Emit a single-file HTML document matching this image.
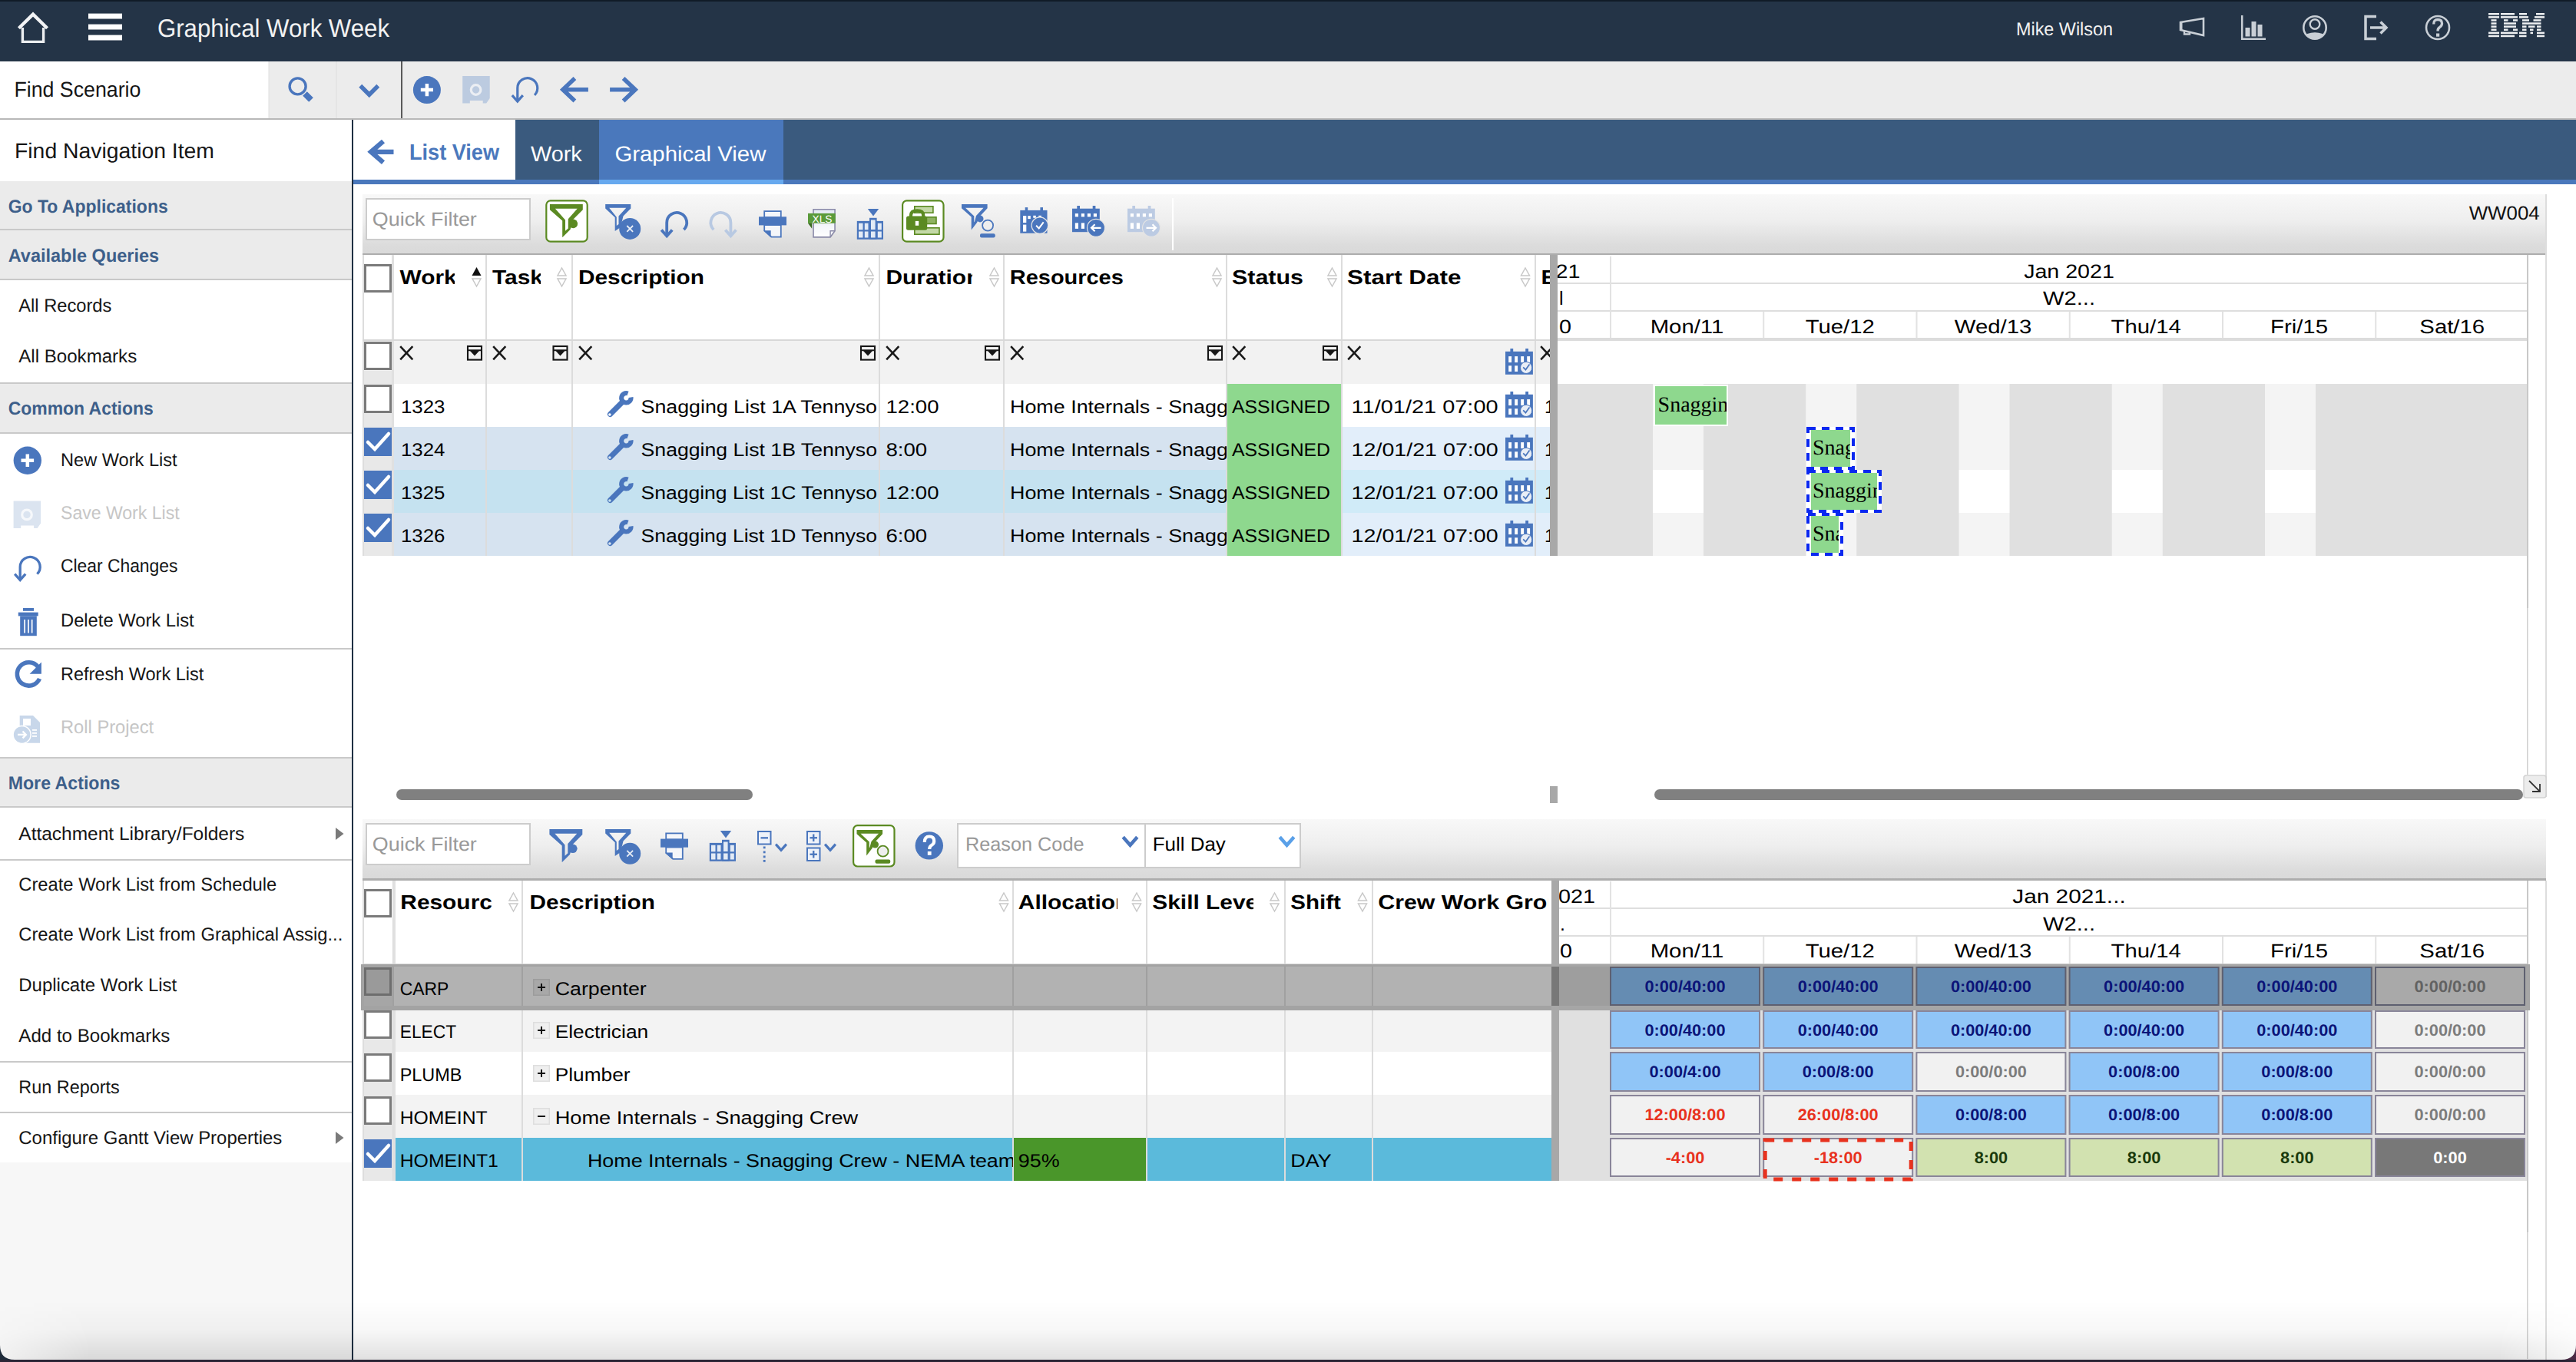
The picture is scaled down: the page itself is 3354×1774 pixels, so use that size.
<!DOCTYPE html>
<html><head><meta charset="utf-8"><title>Graphical Work Week</title>
<style>html,body{margin:0;padding:0;background:#fff;overflow:hidden;width:3354px;height:1774px}svg{display:block}</style></head>
<body><svg width="3354" height="1774" viewBox="0 0 3354 1774" text-rendering="geometricPrecision">
<defs><clipPath id="c1"><rect x="518.5" y="340" width="73.5" height="40"/></clipPath>
<clipPath id="c2"><rect x="639" y="340" width="65" height="40"/></clipPath>
<clipPath id="c3"><rect x="751" y="340" width="370" height="40"/></clipPath>
<clipPath id="c4"><rect x="1151.5" y="340" width="114.5" height="40"/></clipPath>
<clipPath id="c5"><rect x="1312.8" y="340" width="261.20000000000005" height="40"/></clipPath>
<clipPath id="c6"><rect x="1602" y="340" width="122" height="40"/></clipPath>
<clipPath id="c7"><rect x="1752" y="340" width="223.5" height="40"/></clipPath>
<clipPath id="c8"><rect x="2004.5" y="340" width="13.5" height="40"/></clipPath>
<clipPath id="c9"><rect x="830" y="500" width="313" height="56"/></clipPath>
<clipPath id="c10"><rect x="1310" y="500" width="287" height="56"/></clipPath>
<clipPath id="c11"><rect x="2000" y="500" width="18" height="56"/></clipPath>
<clipPath id="c12"><rect x="830" y="556" width="313" height="56"/></clipPath>
<clipPath id="c13"><rect x="1310" y="556" width="287" height="56"/></clipPath>
<clipPath id="c14"><rect x="2000" y="556" width="18" height="56"/></clipPath>
<clipPath id="c15"><rect x="830" y="612" width="313" height="56"/></clipPath>
<clipPath id="c16"><rect x="1310" y="612" width="287" height="56"/></clipPath>
<clipPath id="c17"><rect x="2000" y="612" width="18" height="56"/></clipPath>
<clipPath id="c18"><rect x="830" y="668" width="313" height="56"/></clipPath>
<clipPath id="c19"><rect x="1310" y="668" width="287" height="56"/></clipPath>
<clipPath id="c20"><rect x="2000" y="668" width="18" height="56"/></clipPath>
<clipPath id="c21"><rect x="2028" y="334" width="68" height="34"/></clipPath>
<clipPath id="c22"><rect x="2155" y="503" width="93" height="50"/></clipPath>
<clipPath id="c23"><rect x="2358" y="560" width="51" height="48"/></clipPath>
<clipPath id="c24"><rect x="2358" y="616" width="86" height="48"/></clipPath>
<clipPath id="c25"><rect x="2358" y="672" width="36" height="48"/></clipPath>
<clipPath id="c26"><rect x="519.3" y="1150" width="120.70000000000005" height="45"/></clipPath>
<clipPath id="c27"><rect x="687.5" y="1150" width="608.5" height="45"/></clipPath>
<clipPath id="c28"><rect x="1323.8" y="1150" width="131.20000000000005" height="45"/></clipPath>
<clipPath id="c29"><rect x="1498.3" y="1150" width="133.70000000000005" height="45"/></clipPath>
<clipPath id="c30"><rect x="1678.3" y="1150" width="86.70000000000005" height="45"/></clipPath>
<clipPath id="c31"><rect x="1792.3" y="1150" width="223.20000000000005" height="45"/></clipPath>
<clipPath id="c32"><rect x="760" y="1482" width="559" height="56"/></clipPath>
<clipPath id="c33"><rect x="2030" y="1148" width="67" height="34"/></clipPath></defs>
<rect x="0" y="0" width="3354" height="1774" fill="#ffffff" />
<rect x="0" y="0" width="3354" height="80" fill="#243447" />
<rect x="0" y="0" width="3354" height="2" fill="#101b27" />
<path d="M26,35.2 L43,18.6 L60,35.2" fill="none" stroke="#f2f3f5" stroke-width="4.3" stroke-linejoin="miter" stroke-linecap="square"/>
<path d="M29.4,36 L29.4,54.4 L56.6,54.4 L56.6,36" fill="none" stroke="#eceef0" stroke-width="3.4" stroke-linejoin="miter"/>
<rect x="115" y="17.6" width="44" height="6.9" fill="#ffffff" />
<rect x="115" y="31.6" width="44" height="6.9" fill="#ffffff" />
<rect x="115" y="45.6" width="44" height="6.9" fill="#ffffff" />
<path d="M2839,29 L2869,24 L2869,46 L2839,39 Z" fill="none" stroke="#c9cfd6" stroke-width="2.6" />
<path d="M2840,28 L2840,40" fill="none" stroke="#c9cfd6" stroke-width="3" />
<path d="M2844,40 L2844,44.5 L2851,44.5 L2851,41.5" fill="none" stroke="#c9cfd6" stroke-width="2.4" />
<path d="M2919.2,20 L2919.2,50.8 L2950,50.8" fill="none" stroke="#c9cfd6" stroke-width="2.5" />
<rect x="2923.5" y="36" width="6" height="11.5" fill="#c9cfd6" />
<rect x="2931.5" y="28" width="6" height="19.5" fill="#c9cfd6" />
<rect x="2939.5" y="32" width="6" height="15.5" fill="#c9cfd6" />
<circle cx="3014" cy="36" r="14.7" fill="none" stroke="#c9cfd6" stroke-width="2.6"/>
<circle cx="3014" cy="31.5" r="6.3" fill="none" stroke="#c9cfd6" stroke-width="2.4"/>
<path d="M3004,44 Q3014,40.5 3024,44 L3024.5,45.5 Q3020,51 3014,51 Q3008,51 3003.5,45.5 Z" fill="#c9cfd6" />
<path d="M3094,21.5 L3080,21.5 L3080,50.5 L3094,50.5" fill="none" stroke="#c9cfd6" stroke-width="3.5" />
<path d="M3086,36 L3107,36 M3099.5,28.5 L3107,36 L3099.5,43.5" fill="none" stroke="#c9cfd6" stroke-width="3.5" />
<circle cx="3174" cy="36" r="15" fill="none" stroke="#c9cfd6" stroke-width="2.6"/>
<path d="M3168.7,31.5 Q3168.5,25.5 3174,25.5 Q3179.5,25.5 3179.5,30.5 Q3179.5,33.5 3176.5,35.5 Q3174,37 3174,40.5" fill="none" stroke="#c9cfd6" stroke-width="3.3" />
<rect x="3172" y="43.5" width="4.2" height="4.2" fill="#c9cfd6" />
<rect x="3240" y="17" width="14" height="2.5" fill="#eef0f2" />
<rect x="3256" y="17" width="18" height="2.5" fill="#eef0f2" />
<rect x="3280" y="17" width="10" height="2.5" fill="#eef0f2" />
<rect x="3302" y="17" width="11" height="2.5" fill="#eef0f2" />
<rect x="3240" y="21.1" width="14" height="2.5" fill="#eef0f2" />
<rect x="3256" y="21.1" width="22" height="2.5" fill="#eef0f2" />
<rect x="3280" y="21.1" width="12" height="2.5" fill="#eef0f2" />
<rect x="3300" y="21.1" width="13" height="2.5" fill="#eef0f2" />
<rect x="3243.5" y="25.2" width="7" height="2.5" fill="#eef0f2" />
<rect x="3260" y="25.2" width="5.5" height="2.5" fill="#eef0f2" />
<rect x="3272" y="25.2" width="6" height="2.5" fill="#eef0f2" />
<rect x="3284" y="25.2" width="9" height="2.5" fill="#eef0f2" />
<rect x="3298.5" y="25.2" width="10" height="2.5" fill="#eef0f2" />
<rect x="3243.5" y="29.3" width="7" height="2.5" fill="#eef0f2" />
<rect x="3260" y="29.3" width="16" height="2.5" fill="#eef0f2" />
<rect x="3284" y="29.3" width="24.5" height="2.5" fill="#eef0f2" />
<rect x="3243.5" y="33.4" width="7" height="2.5" fill="#eef0f2" />
<rect x="3260" y="33.4" width="16" height="2.5" fill="#eef0f2" />
<rect x="3284" y="33.4" width="5.5" height="2.5" fill="#eef0f2" />
<rect x="3292" y="33.4" width="8.5" height="2.5" fill="#eef0f2" />
<rect x="3303" y="33.4" width="5.5" height="2.5" fill="#eef0f2" />
<rect x="3243.5" y="37.5" width="7" height="2.5" fill="#eef0f2" />
<rect x="3260" y="37.5" width="5.5" height="2.5" fill="#eef0f2" />
<rect x="3272" y="37.5" width="6" height="2.5" fill="#eef0f2" />
<rect x="3284" y="37.5" width="5.5" height="2.5" fill="#eef0f2" />
<rect x="3294" y="37.5" width="4.5" height="2.5" fill="#eef0f2" />
<rect x="3303" y="37.5" width="5.5" height="2.5" fill="#eef0f2" />
<rect x="3240" y="41.6" width="14" height="2.5" fill="#eef0f2" />
<rect x="3256" y="41.6" width="22" height="2.5" fill="#eef0f2" />
<rect x="3280" y="41.6" width="9.5" height="2.5" fill="#eef0f2" />
<rect x="3294.5" y="41.6" width="3.5" height="2.5" fill="#eef0f2" />
<rect x="3303" y="41.6" width="10" height="2.5" fill="#eef0f2" />
<rect x="3240" y="45.7" width="14" height="2.5" fill="#eef0f2" />
<rect x="3256" y="45.7" width="18" height="2.5" fill="#eef0f2" />
<rect x="3280" y="45.7" width="9.5" height="2.5" fill="#eef0f2" />
<rect x="3303" y="45.7" width="10" height="2.5" fill="#eef0f2" />
<text x="205" y="48" font-family="Liberation Sans" font-size="33" fill="#f2f2f2" textLength="302.0" lengthAdjust="spacingAndGlyphs" >Graphical Work Week</text>
<text x="2625" y="45.5" font-family="Liberation Sans" font-size="24" fill="#f2f2f2" textLength="126.0" lengthAdjust="spacingAndGlyphs" >Mike Wilson</text>
<rect x="0" y="80" width="3354" height="75" fill="#ececec" />
<rect x="0" y="80" width="350" height="75" fill="#ffffff" />
<line x1="350" y1="80" x2="350" y2="155" stroke="#dedede" stroke-width="1" />
<line x1="438" y1="80" x2="438" y2="155" stroke="#dedede" stroke-width="1" />
<rect x="522" y="80" width="2" height="75" fill="#5a5a5a" />
<rect x="0" y="154" width="3354" height="2" fill="#b8b8b8" />
<text x="18.4" y="126.3" font-family="Liberation Sans" font-size="28" fill="#161616" textLength="165.0" lengthAdjust="spacingAndGlyphs" >Find Scenario</text>
<circle cx="387.6" cy="112.4" r="10.5" fill="none" stroke="#4a76bd" stroke-width="3.4"/>
<path d="M397,122 L405,130" fill="none" stroke="#4a76bd" stroke-width="8" />
<path d="M469.25,111.75 L480.75,123.25 L492.25,111.75" fill="none" stroke="#4a76bd" stroke-width="5.5" />
<circle cx="555.9" cy="117.1" r="18" fill="#4a76bd"/>
<path d="M555.9,109 L555.9,125.2 M547.8,117.1 L564,117.1" fill="none" stroke="#fff" stroke-width="4.5" />
<path d="M602.2,99 L637.7,99 L637.7,128 L633.2,134.5 L628.7,134.5 L628.7,131 L611.8000000000001,131 L611.8000000000001,134.5 L602.2,134.5 Z" fill="#bccbe0" />
<circle cx="619.6" cy="117" r="6.3" fill="none" stroke="#ebeef3" stroke-width="3.2"/>
<path d="M673.8,130.1 L673.8,114.7 A13,13 0 1 1 696.0,123.9" fill="none" stroke="#4a76bd" stroke-width="3.2" />
<path d="M666.8,124.1 L673.8,132.1 L680.8,124.1" fill="none" stroke="#4a76bd" stroke-width="3.2" stroke-linejoin="miter"/>
<path d="M765.9,116.75 L735.4,116.75 M748.4,102.1 L732.9,116.75 L748.4,131.39999999999998" fill="none" stroke="#4a76bd" stroke-width="5.5" />
<path d="M794.1,116.75 L824.6,116.75 M811.6,102.1 L827.1,116.75 L811.6,131.39999999999998" fill="none" stroke="#4a76bd" stroke-width="5.5" />
<rect x="0" y="156" width="458" height="1615" fill="#ffffff" />
<rect x="0" y="1514" width="458" height="257" fill="#f7f7f7" />
<rect x="458" y="156" width="2" height="1615" fill="#1f3043" />
<text x="19" y="206" font-family="Liberation Sans" font-size="28" fill="#161616" textLength="260.0" lengthAdjust="spacingAndGlyphs" >Find Navigation Item</text>
<rect x="0" y="236" width="458" height="62" fill="#ebebeb" />
<rect x="0" y="298" width="458" height="2" fill="#c9c9c9" />
<text x="10.7" y="276.7" font-family="Liberation Sans" font-size="24" fill="#3d5f8a" font-weight="bold" textLength="208.0" lengthAdjust="spacingAndGlyphs" >Go To Applications</text>
<rect x="0" y="300" width="458" height="63" fill="#ebebeb" />
<rect x="0" y="363" width="458" height="2" fill="#c9c9c9" />
<text x="10.7" y="340.7" font-family="Liberation Sans" font-size="24" fill="#3d5f8a" font-weight="bold" textLength="196.5" lengthAdjust="spacingAndGlyphs" >Available Queries</text>
<text x="24.3" y="405.6" font-family="Liberation Sans" font-size="24" fill="#161616" textLength="121.0" lengthAdjust="spacingAndGlyphs" >All Records</text>
<text x="24.3" y="471.8" font-family="Liberation Sans" font-size="24" fill="#161616" textLength="153.9" lengthAdjust="spacingAndGlyphs" >All Bookmarks</text>
<rect x="0" y="498" width="458" height="2" fill="#c9c9c9" />
<rect x="0" y="500" width="458" height="63" fill="#ebebeb" />
<rect x="0" y="563" width="458" height="2" fill="#c9c9c9" />
<text x="10.7" y="540" font-family="Liberation Sans" font-size="24" fill="#3d5f8a" font-weight="bold" textLength="189.0" lengthAdjust="spacingAndGlyphs" >Common Actions</text>
<text x="79" y="606.5" font-family="Liberation Sans" font-size="24" fill="#161616" textLength="151.6" lengthAdjust="spacingAndGlyphs" >New Work List</text>
<text x="79" y="676.3" font-family="Liberation Sans" font-size="24" fill="#c6c6c6" textLength="154.6" lengthAdjust="spacingAndGlyphs" >Save Work List</text>
<text x="79" y="745.3" font-family="Liberation Sans" font-size="24" fill="#161616" textLength="152.4" lengthAdjust="spacingAndGlyphs" >Clear Changes</text>
<text x="79" y="815.8" font-family="Liberation Sans" font-size="24" fill="#161616" textLength="173.7" lengthAdjust="spacingAndGlyphs" >Delete Work List</text>
<text x="79" y="885.6" font-family="Liberation Sans" font-size="24" fill="#161616" textLength="186.2" lengthAdjust="spacingAndGlyphs" >Refresh Work List</text>
<text x="79" y="955.4" font-family="Liberation Sans" font-size="24" fill="#c6c6c6" textLength="121.1" lengthAdjust="spacingAndGlyphs" >Roll Project</text>
<rect x="0" y="844" width="458" height="2" fill="#c9c9c9" />
<rect x="0" y="986" width="458" height="2" fill="#c9c9c9" />
<circle cx="35.8" cy="599.8" r="18.2" fill="#4a76bd"/>
<path d="M35.8,591.5 L35.8,608.1 M27.5,599.8 L44.1,599.8" fill="none" stroke="#fff" stroke-width="4.5" />
<path d="M17.6,652.4 L53.1,652.4 L53.1,681.4 L48.6,687.9 L44.1,687.9 L44.1,684.4 L27.200000000000003,684.4 L27.200000000000003,687.9 L17.6,687.9 Z" fill="#dbe4f0" />
<circle cx="35.0" cy="670.4" r="6.3" fill="none" stroke="#f6f8fb" stroke-width="3.2"/>
<path d="M26.2,753.6 L26.2,738.4 A13,13 0 1 1 48.4,747.6" fill="none" stroke="#4a76bd" stroke-width="3.3" />
<path d="M19.2,747.6 L26.2,755.6 L33.2,747.6" fill="none" stroke="#4a76bd" stroke-width="3.3" stroke-linejoin="miter"/>
<rect x="30" y="792" width="14" height="3.8" fill="#4a76bd" />
<rect x="23.8" y="797.6" width="25.9" height="4.8" fill="#4a76bd" />
<rect x="26.2" y="802.4" width="21.6" height="25.8" fill="#4a76bd" />
<rect x="31.3" y="807" width="1.7" height="17.5" fill="#ffffff" />
<rect x="36.1" y="807" width="1.7" height="17.5" fill="#ffffff" />
<rect x="40.8" y="807" width="1.7" height="17.5" fill="#ffffff" />
<path d="M49.5,868.5 A15.2,15.2 0 1 0 51.5,884" fill="none" stroke="#4a76bd" stroke-width="5.6" />
<path d="M38.6,877.7 L53.9,877.7 L53.9,862.4 Z" fill="#4a76bd" />
<path d="M25.7,932 L43,932 L52,941 L52,967.8 L25.7,967.8 Z" fill="#c8d7ea" />
<rect x="30" y="936" width="10" height="9" fill="#ffffff" />
<rect x="42" y="950" width="6" height="1.8" fill="#ffffff" />
<rect x="42" y="954" width="6" height="1.8" fill="#ffffff" />
<rect x="42" y="958" width="6" height="1.8" fill="#ffffff" />
<circle cx="28.6" cy="956.9" r="11.5" fill="#c8d7ea" stroke="#ffffff" stroke-width="1.5"/>
<path d="M23,956.9 L33.5,956.9 M29.5,952.5 L33.8,956.9 L29.5,961.3" fill="none" stroke="#ffffff" stroke-width="2.4" />
<rect x="0" y="988" width="458" height="62" fill="#ebebeb" />
<rect x="0" y="1050" width="458" height="2" fill="#c9c9c9" />
<text x="10.7" y="1027.7" font-family="Liberation Sans" font-size="24" fill="#3d5f8a" font-weight="bold" textLength="145.8" lengthAdjust="spacingAndGlyphs" >More Actions</text>
<text x="24.3" y="1093.8" font-family="Liberation Sans" font-size="24" fill="#161616" textLength="294.0" lengthAdjust="spacingAndGlyphs" >Attachment Library/Folders</text>
<text x="24.3" y="1159.5" font-family="Liberation Sans" font-size="24" fill="#161616" textLength="336.0" lengthAdjust="spacingAndGlyphs" >Create Work List from Schedule</text>
<text x="24.3" y="1225.1" font-family="Liberation Sans" font-size="24" fill="#161616" textLength="422.0" lengthAdjust="spacingAndGlyphs" >Create Work List from Graphical Assig...</text>
<text x="24.3" y="1291.2" font-family="Liberation Sans" font-size="24" fill="#161616" textLength="205.9" lengthAdjust="spacingAndGlyphs" >Duplicate Work List</text>
<text x="24.3" y="1357.2" font-family="Liberation Sans" font-size="24" fill="#161616" textLength="197.0" lengthAdjust="spacingAndGlyphs" >Add to Bookmarks</text>
<text x="24.3" y="1423.7" font-family="Liberation Sans" font-size="24" fill="#161616" textLength="131.5" lengthAdjust="spacingAndGlyphs" >Run Reports</text>
<text x="24.3" y="1489.7" font-family="Liberation Sans" font-size="24" fill="#161616" textLength="343.0" lengthAdjust="spacingAndGlyphs" >Configure Gantt View Properties</text>
<rect x="0" y="1119" width="458" height="2" fill="#c9c9c9" />
<rect x="0" y="1382" width="458" height="2" fill="#c9c9c9" />
<rect x="0" y="1448" width="458" height="2" fill="#c9c9c9" />
<path d="M437,1078 L447.5,1086 L437,1094 Z" fill="#7a7a7a" />
<path d="M437,1474 L447.5,1482 L437,1490 Z" fill="#7a7a7a" />
<rect x="460" y="156" width="2894" height="78" fill="#3a5a7e" />
<rect x="460" y="156" width="211" height="78" fill="#ffffff" />
<rect x="780" y="156" width="240" height="78" fill="#4a78bc" />
<rect x="460" y="234" width="2894" height="6" fill="#4a78bc" />
<rect x="780" y="234" width="240" height="6" fill="#67a9ef" />
<text x="533" y="208" font-family="Liberation Sans" font-size="29" fill="#4a78bc" font-weight="bold" textLength="117.0" lengthAdjust="spacingAndGlyphs" >List View</text>
<text x="691" y="209.8" font-family="Liberation Sans" font-size="28" fill="#ffffff" textLength="66.7" lengthAdjust="spacingAndGlyphs" >Work</text>
<text x="800.4" y="209.8" font-family="Liberation Sans" font-size="28" fill="#ffffff" textLength="197.0" lengthAdjust="spacingAndGlyphs" >Graphical View</text>
<path d="M512.5,197.8 L485,197.8 M499,184 L483,197.8 L499,211.6" fill="none" stroke="#4a76bd" stroke-width="6.2" />
<defs><linearGradient id="tbg1" x1="0" y1="0" x2="0" y2="1"><stop offset="0" stop-color="#f8f8f8"/><stop offset="0.45" stop-color="#eeeeee"/><stop offset="0.85" stop-color="#dcdcdc"/><stop offset="1" stop-color="#d9d9d9"/></linearGradient></defs>
<rect x="472" y="253" width="2843" height="77" fill="url(#tbg1)" />
<rect x="472" y="330" width="2843" height="2" fill="#adadad" />
<rect x="477.0" y="259.0" width="213" height="53" fill="#ffffff" stroke="#cccccc" stroke-width="2" />
<text x="484.8" y="294" font-family="Liberation Sans" font-size="25" fill="#999999" textLength="136.0" lengthAdjust="spacingAndGlyphs" >Quick Filter</text>
<rect x="711.3000000000001" y="261.3" width="53.4" height="53.4" rx="5.5" fill="#fff" stroke="#5b8a22" stroke-width="2.2"/>
<path d="M715.9,266.1 L758.8,266.1 L758.8,273.2 L746.5,285.5 L742.5,299.0 L732.2,309.3 L732.2,287.5 L715.9,273.2 Z M722.9,271.8 L751.7,271.8 L739.8,285.2 L739.8,297.4 L736.0,300.8 L736.0,286.5 Z" fill="#5b8a22" fill-rule="evenodd"/>
<circle cx="746.3" cy="291.4" r="5.8" fill="#5b8a22"/>
<path d="M788.2,266.1 L821.3,266.1 L821.3,271.5 L811.5,281.5 L808.0,296.0 L800.7,301.0 L800.7,283.3 L788.2,271.5 Z M793.2,270.8 L815.3,270.8 L805.5,281.6 L805.5,292.0 L802.8,294.0 L802.8,282.7 Z" fill="#4a76bd" fill-rule="evenodd"/>
<circle cx="820.2" cy="297.9" r="14" fill="#4a76bd"/>
<path d="M816.3,294.0 L824.1,301.8 M824.1,294.0 L816.3,301.8" fill="none" stroke="#e8edf5" stroke-width="1.8" />
<path d="M868.2,305.4 L868.2,290 A13,13 0 1 1 890.4,299.2" fill="none" stroke="#4a76bd" stroke-width="3.8" />
<path d="M861.2,299.4 L868.2,307.4 L875.2,299.4" fill="none" stroke="#4a76bd" stroke-width="3.8" stroke-linejoin="miter"/>
<path d="M951.4,305.4 L951.4,290 A13,13 0 1 0 929.2,299.2" fill="none" stroke="#b8c9e2" stroke-width="3.8" />
<path d="M944.4,299.4 L951.4,307.4 L958.4,299.4" fill="none" stroke="#b8c9e2" stroke-width="3.8" stroke-linejoin="miter"/>
<rect x="995.2" y="275.09999999999997" width="21.6" height="8" fill="#f4f6fa" stroke="#4a76bd" stroke-width="1.8"/>
<rect x="988" y="282.3" width="36" height="11.1" fill="#4a76bd" />
<path d="M995.2,293.2 L1016.8,293.2 L1016.8,308.59999999999997 L1004.6,308.59999999999997 L995.2,300.7 Z" fill="#f4f6fa" stroke="#4a76bd" stroke-width="1.8" />
<path d="M994.3,300.2 L1003.7,300.2 L1003.7,309.5 Z" fill="#4a76bd" />
<defs><linearGradient id="xlsg" x1="0" y1="0" x2="0" y2="1"><stop offset="0" stop-color="#e3e8f3"/><stop offset="1" stop-color="#ffffff"/></linearGradient></defs>
<path d="M1059.05,272.75 L1087.05,272.75 L1087.05,300.8 L1081.1,308.85 L1059.05,308.85 Z" fill="url(#xlsg)" stroke="#8a8aa8" stroke-width="1.6" />
<path d="M1087,300.8 L1081.1,300.8 L1081.1,308.8" fill="none" stroke="#8a8aa8" stroke-width="1.4" />
<rect x="1052" y="277.9" width="35.8" height="12.9" fill="#5a9a3a" />
<path d="M1052,290.8 L1057.2,297.8 L1057.2,290.8 Z" fill="#3a6a22" />
<text x="1057.5" y="289.7" font-family="Liberation Sans" font-size="13.5" fill="#ffffff" textLength="26.0" lengthAdjust="spacingAndGlyphs" >XLS</text>
<path d="M1129.8,272 L1144.2,272 L1137.0,281.6 Z" fill="#4a76bd" />
<rect x="1132.0" y="283.8" width="9.6" height="28" fill="#4a76bd" />
<rect x="1115.8" y="287.9" width="34.2" height="23.9" fill="#4a76bd" />
<rect x="1118.0" y="290.8" width="5.5" height="8.5" fill="#e3ebf6" />
<rect x="1125.8" y="290.8" width="4.7" height="8.5" fill="#e3ebf6" />
<rect x="1118.0" y="301.5" width="5.5" height="8" fill="#e3ebf6" />
<rect x="1125.8" y="301.5" width="4.7" height="8" fill="#e3ebf6" />
<rect x="1134.0" y="286.5" width="5.6" height="12.5" fill="#e3ebf6" />
<rect x="1134.0" y="301.5" width="5.6" height="8" fill="#e3ebf6" />
<rect x="1142.8" y="290.8" width="5" height="8.5" fill="#e3ebf6" />
<rect x="1142.8" y="301.5" width="5" height="8" fill="#e3ebf6" />
<rect x="1175.1" y="261.3" width="53.4" height="53.4" rx="5.5" fill="#fff" stroke="#5b8a22" stroke-width="2.2"/>
<rect x="1190.8" y="268.8" width="24.1" height="8.4" fill="#c3d8a6" stroke="#5b8a22" stroke-width="1.6"/>
<rect x="1204.4" y="282.8" width="14.6" height="8.7" fill="#8fb262" stroke="#5b8a22" stroke-width="1.6"/>
<rect x="1190.8" y="296.8" width="32.2" height="8.4" fill="#c3d8a6" stroke="#5b8a22" stroke-width="1.6"/>
<path d="M1186,283 L1186,280.5 Q1186,274.4 1194.1,274.4 Q1202.2,274.4 1202.2,280.5 L1202.2,283" fill="none" stroke="#5b8a22" stroke-width="4.2"/>
<rect x="1180" y="281.6" width="27.2" height="18.1" rx="2.5" fill="#5b8a22"/>
<rect x="1191.8" y="287.9" width="4.4" height="5.9" fill="#ffffff" />
<path d="M1252.0,265.9 L1285.6,265.9 L1285.6,271.2 L1276.0,281.4 L1272.0,289.9 L1264.7,299.5 L1264.7,282.4 L1252.0,271.2 Z M1257.0,270.7 L1280.5,270.7 L1271.0,280.9 L1269.0,288.4 L1268.3,289.4 L1268.3,281.4 Z" fill="#4a76bd" fill-rule="evenodd"/>
<circle cx="1276" cy="284.9" r="4.5" fill="#4a76bd"/>
<circle cx="1286.1" cy="293.59999999999997" r="7" fill="#eeeeee" stroke="#4a76bd" stroke-width="1.8"/>
<rect x="1276" y="304.29999999999995" width="19.7" height="5.3" rx="2" fill="#4a76bd"/>
<rect x="1328.3" y="273.90000000000003" width="35.2" height="29.9" fill="#4a76bd" />
<rect x="1334.7" y="270.1" width="3.5" height="6" fill="#4a76bd" />
<rect x="1354.3999999999999" y="270.1" width="3.6" height="6" fill="#4a76bd" />
<rect x="1332.0" y="281.1" width="4.3" height="9" fill="#ffffff" />
<rect x="1332.0" y="292.6" width="4.3" height="9" fill="#ffffff" />
<rect x="1338.3" y="281.1" width="3.5" height="4" fill="#ffffff" />
<rect x="1345.3" y="280.8" width="3.5" height="3" fill="#ffffff" />
<rect x="1352.3" y="280.8" width="3.5" height="3" fill="#ffffff" />
<circle cx="1353.8999999999999" cy="293.6" r="10.8" fill="#4a76bd" stroke="#e4e4e4" stroke-width="1.2"/>
<path d="M1349.1,293.8 L1352.7,297.40000000000003 L1358.7,289.40000000000003" fill="none" stroke="#ffffff" stroke-width="2" />
<rect x="1396" y="271.7" width="35.8" height="30.5" fill="#4a76bd" />
<rect x="1402.3" y="268" width="3.7" height="6" fill="#4a76bd" />
<rect x="1422.7" y="268" width="3.7" height="6" fill="#4a76bd" />
<rect x="1399.8" y="278.1" width="4.2" height="4.3" fill="#ffffff" />
<rect x="1407.8" y="278.1" width="4.2" height="4.3" fill="#ffffff" />
<rect x="1415.8" y="278.1" width="4.2" height="4.3" fill="#ffffff" />
<rect x="1423.8" y="278.1" width="4.2" height="4.3" fill="#ffffff" />
<rect x="1399.8" y="290.4" width="4.2" height="7.5" fill="#ffffff" />
<rect x="1407.8" y="290.4" width="4.2" height="7.5" fill="#ffffff" />
<circle cx="1427" cy="296.8" r="11.5" fill="#4a76bd" stroke="#e4e4e4" stroke-width="1.2"/>
<path d="M1433.5,296.8 L1421,296.8 M1425.5,292.3 L1421,296.8 L1425.5,301.3" fill="none" stroke="#ffffff" stroke-width="2.2" />
<rect x="1468" y="271.7" width="35.8" height="30.5" fill="#bccbe3" />
<rect x="1474.3" y="268" width="3.7" height="6" fill="#bccbe3" />
<rect x="1494.7" y="268" width="3.7" height="6" fill="#bccbe3" />
<rect x="1471.8" y="278.1" width="4.2" height="4.3" fill="#ffffff" />
<rect x="1479.8" y="278.1" width="4.2" height="4.3" fill="#ffffff" />
<rect x="1487.8" y="278.1" width="4.2" height="4.3" fill="#ffffff" />
<rect x="1495.8" y="278.1" width="4.2" height="4.3" fill="#ffffff" />
<rect x="1471.8" y="290.4" width="4.2" height="7.5" fill="#ffffff" />
<rect x="1479.8" y="290.4" width="4.2" height="7.5" fill="#ffffff" />
<circle cx="1499" cy="296.8" r="11.5" fill="#bccbe3" stroke="#e4e4e4" stroke-width="1.2"/>
<path d="M1492.5,296.8 L1505,296.8 M1500.5,292.3 L1505,296.8 L1500.5,301.3" fill="none" stroke="#ffffff" stroke-width="2.2" />
<rect x="1526" y="258" width="2" height="68" fill="#ffffff" />
<text x="3306.7" y="286" font-family="Liberation Sans" font-size="25" fill="#111111" text-anchor="end" textLength="92.0" lengthAdjust="spacingAndGlyphs" >WW004</text>
<rect x="3314" y="253" width="2" height="785" fill="#dddddd" />
<rect x="472" y="332" width="1546" height="111" fill="#ffffff" />
<rect x="472" y="443" width="1546" height="57" fill="#f2f2f2" />
<rect x="472" y="332" width="2" height="392" fill="#dddddd" />
<rect x="474" y="500" width="1544" height="56" fill="#ffffff" />
<rect x="1747" y="500" width="271" height="56" fill="#ffffff" />
<rect x="1597" y="500" width="150" height="56" fill="#8ed88e" />
<rect x="474" y="556" width="1544" height="56" fill="#d6e3f0" />
<rect x="1747" y="556" width="271" height="56" fill="#e2eefa" />
<rect x="1597" y="556" width="150" height="56" fill="#8ed88e" />
<rect x="474" y="612" width="1544" height="56" fill="#c5e2f0" />
<rect x="1747" y="612" width="271" height="56" fill="#d0ebf8" />
<rect x="1597" y="612" width="150" height="56" fill="#8ed88e" />
<rect x="474" y="668" width="1544" height="56" fill="#d6e3f0" />
<rect x="1747" y="668" width="271" height="56" fill="#e2eefa" />
<rect x="1597" y="668" width="150" height="56" fill="#8ed88e" />
<rect x="474" y="470" width="37" height="254" fill="#e8e8e8" />
<rect x="474" y="443" width="37" height="40" fill="#f2f2f2" />
<rect x="510" y="332" width="2" height="392" fill="#dcdcdc" />
<rect x="632" y="332" width="2" height="392" fill="#dcdcdc" />
<rect x="744" y="332" width="2" height="392" fill="#dcdcdc" />
<rect x="1144" y="332" width="2" height="392" fill="#dcdcdc" />
<rect x="1306" y="332" width="2" height="392" fill="#dcdcdc" />
<rect x="1596" y="332" width="2" height="392" fill="#dcdcdc" />
<rect x="1746" y="332" width="2" height="392" fill="#dcdcdc" />
<rect x="1998" y="332" width="2" height="392" fill="#dcdcdc" />
<rect x="510" y="332" width="3" height="392" fill="#e0e0e0" />
<rect x="472" y="442" width="1546" height="2" fill="#d8d8d8" />
<rect x="475.5" y="345.5" width="33" height="34" fill="#ffffff" stroke="#7a7a7a" stroke-width="3" />
<rect x="475.5" y="446.5" width="33" height="34" fill="#ffffff" stroke="#7a7a7a" stroke-width="3" />
<text x="520.5" y="370" font-family="Liberation Sans" font-size="26" fill="#000000" font-weight="bold" textLength="74.2" lengthAdjust="spacingAndGlyphs" clip-path="url(#c1)" >Work</text>
<path d="M620.5,348 L626.5,359 L614.5,359 Z" fill="#111111" />
<path d="M620.5,373 L626,363 L615,363 Z" fill="none" stroke="#c8c8c8" stroke-width="1.5" />
<text x="641" y="370" font-family="Liberation Sans" font-size="26" fill="#000000" font-weight="bold" textLength="65.9" lengthAdjust="spacingAndGlyphs" clip-path="url(#c2)" >Task</text>
<path d="M731.5,349 L737,359 L726,359 Z" fill="none" stroke="#c8c8c8" stroke-width="1.5" />
<path d="M731.5,373 L737,363 L726,363 Z" fill="none" stroke="#c8c8c8" stroke-width="1.5" />
<text x="753" y="370" font-family="Liberation Sans" font-size="26" fill="#000000" font-weight="bold" textLength="164.0" lengthAdjust="spacingAndGlyphs" clip-path="url(#c3)" >Description</text>
<path d="M1131.5,349 L1137,359 L1126,359 Z" fill="none" stroke="#c8c8c8" stroke-width="1.5" />
<path d="M1131.5,373 L1137,363 L1126,363 Z" fill="none" stroke="#c8c8c8" stroke-width="1.5" />
<text x="1153.5" y="370" font-family="Liberation Sans" font-size="26" fill="#000000" font-weight="bold" textLength="122.9" lengthAdjust="spacingAndGlyphs" clip-path="url(#c4)" >Duration</text>
<path d="M1294.5,349 L1300,359 L1289,359 Z" fill="none" stroke="#c8c8c8" stroke-width="1.5" />
<path d="M1294.5,373 L1300,363 L1289,363 Z" fill="none" stroke="#c8c8c8" stroke-width="1.5" />
<text x="1314.8" y="370" font-family="Liberation Sans" font-size="26" fill="#000000" font-weight="bold" textLength="148.0" lengthAdjust="spacingAndGlyphs" clip-path="url(#c5)" >Resources</text>
<path d="M1584.5,349 L1590,359 L1579,359 Z" fill="none" stroke="#c8c8c8" stroke-width="1.5" />
<path d="M1584.5,373 L1590,363 L1579,363 Z" fill="none" stroke="#c8c8c8" stroke-width="1.5" />
<text x="1604" y="370" font-family="Liberation Sans" font-size="26" fill="#000000" font-weight="bold" textLength="93.0" lengthAdjust="spacingAndGlyphs" clip-path="url(#c6)" >Status</text>
<path d="M1734.5,349 L1740,359 L1729,359 Z" fill="none" stroke="#c8c8c8" stroke-width="1.5" />
<path d="M1734.5,373 L1740,363 L1729,363 Z" fill="none" stroke="#c8c8c8" stroke-width="1.5" />
<text x="1754" y="370" font-family="Liberation Sans" font-size="26" fill="#000000" font-weight="bold" textLength="148.5" lengthAdjust="spacingAndGlyphs" clip-path="url(#c7)" >Start Date</text>
<path d="M1986.0,349 L1991.5,359 L1980.5,359 Z" fill="none" stroke="#c8c8c8" stroke-width="1.5" />
<path d="M1986.0,373 L1991.5,363 L1980.5,363 Z" fill="none" stroke="#c8c8c8" stroke-width="1.5" />
<text x="2006.5" y="370" font-family="Liberation Sans" font-size="26" fill="#000000" font-weight="bold" textLength="129.6" lengthAdjust="spacingAndGlyphs" clip-path="url(#c8)" >End Date</text>
<path d="M521.2,451.2 L537.3,468.4 M537.3,451.2 L521.2,468.4" fill="none" stroke="#1a1a1a" stroke-width="2.6" />
<path d="M642.2,451.2 L658.3,468.4 M658.3,451.2 L642.2,468.4" fill="none" stroke="#1a1a1a" stroke-width="2.6" />
<path d="M754.2,451.2 L770.3,468.4 M770.3,451.2 L754.2,468.4" fill="none" stroke="#1a1a1a" stroke-width="2.6" />
<path d="M1154.2,451.2 L1170.3,468.4 M1170.3,451.2 L1154.2,468.4" fill="none" stroke="#1a1a1a" stroke-width="2.6" />
<path d="M1316.2,451.2 L1332.3,468.4 M1332.3,451.2 L1316.2,468.4" fill="none" stroke="#1a1a1a" stroke-width="2.6" />
<path d="M1605.2,451.2 L1621.3,468.4 M1621.3,451.2 L1605.2,468.4" fill="none" stroke="#1a1a1a" stroke-width="2.6" />
<path d="M1755.2,451.2 L1771.3,468.4 M1771.3,451.2 L1755.2,468.4" fill="none" stroke="#1a1a1a" stroke-width="2.6" />
<path d="M2006.2,451.2 L2022.3,468.4 M2022.3,451.2 L2006.2,468.4" fill="none" stroke="#1a1a1a" stroke-width="2.6" />
<rect x="609" y="451" width="18" height="17.6" fill="#f2f2f2" stroke="#161616" stroke-width="2.1"/>
<rect x="609" y="455.3" width="18" height="1.9" fill="#161616" />
<path d="M612,457 L624,457 L618,463.5 Z" fill="#161616" />
<rect x="720.5" y="451" width="18" height="17.6" fill="#f2f2f2" stroke="#161616" stroke-width="2.1"/>
<rect x="720.5" y="455.3" width="18" height="1.9" fill="#161616" />
<path d="M723.5,457 L735.5,457 L729.5,463.5 Z" fill="#161616" />
<rect x="1121" y="451" width="18" height="17.6" fill="#f2f2f2" stroke="#161616" stroke-width="2.1"/>
<rect x="1121" y="455.3" width="18" height="1.9" fill="#161616" />
<path d="M1124,457 L1136,457 L1130,463.5 Z" fill="#161616" />
<rect x="1283" y="451" width="18" height="17.6" fill="#f2f2f2" stroke="#161616" stroke-width="2.1"/>
<rect x="1283" y="455.3" width="18" height="1.9" fill="#161616" />
<path d="M1286,457 L1298,457 L1292,463.5 Z" fill="#161616" />
<rect x="1573" y="451" width="18" height="17.6" fill="#f2f2f2" stroke="#161616" stroke-width="2.1"/>
<rect x="1573" y="455.3" width="18" height="1.9" fill="#161616" />
<path d="M1576,457 L1588,457 L1582,463.5 Z" fill="#161616" />
<rect x="1723" y="451" width="18" height="17.6" fill="#f2f2f2" stroke="#161616" stroke-width="2.1"/>
<rect x="1723" y="455.3" width="18" height="1.9" fill="#161616" />
<path d="M1726,457 L1738,457 L1732,463.5 Z" fill="#161616" />
<rect x="1960" y="457.8" width="35.9" height="30" fill="#4a76bd" />
<rect x="1966.4" y="454" width="3.8" height="6" fill="#4a76bd" />
<rect x="1986.2" y="454" width="3.8" height="6" fill="#4a76bd" />
<rect x="1964.2" y="464.1" width="3.9" height="8" fill="#ffffff" />
<rect x="1972.2" y="464.1" width="3.9" height="8" fill="#ffffff" />
<rect x="1980.2" y="464.1" width="3.9" height="8" fill="#ffffff" />
<rect x="1988.2" y="464.1" width="3.9" height="8" fill="#ffffff" />
<rect x="1964.2" y="476.3" width="3.9" height="7.7" fill="#ffffff" />
<rect x="1972.2" y="476.3" width="3.9" height="7.7" fill="#ffffff" />
<circle cx="1987.1" cy="478.9" r="7.6" fill="#e9eef6" stroke="#4a76bd" stroke-width="1"/>
<path d="M1983.2,478.3 L1986.4,481.6 L1991.5,474.5" fill="none" stroke="#4a76bd" stroke-width="1.7" />
<rect x="475.5" y="502.5" width="33" height="34" fill="#ffffff" stroke="#7a7a7a" stroke-width="3" />
<text x="522" y="538" font-family="Liberation Sans" font-size="24" fill="#000" textLength="57.4" lengthAdjust="spacingAndGlyphs" >1323</text>
<path d="M794.5,539.5 L810.0,524.0" fill="none" stroke="#4a76bd" stroke-width="7" stroke-linecap="round"/>
<path d="M817.5,512.5 A6.2,6.2 0 1 0 821.5,517.5" fill="none" stroke="#4a76bd" stroke-width="6" />
<circle cx="793.9" cy="540.0" r="1.8" fill="#ffffff"/>
<text x="834.6" y="538" font-family="Liberation Sans" font-size="24" fill="#000" textLength="322.3" lengthAdjust="spacingAndGlyphs" clip-path="url(#c9)" >Snagging List 1A Tennyson</text>
<text x="1153.5" y="538" font-family="Liberation Sans" font-size="24" fill="#000" textLength="69.0" lengthAdjust="spacingAndGlyphs" >12:00</text>
<text x="1315" y="538" font-family="Liberation Sans" font-size="24" fill="#000" textLength="389.9" lengthAdjust="spacingAndGlyphs" clip-path="url(#c10)" >Home Internals - Snagging Crew</text>
<text x="1604" y="538" font-family="Liberation Sans" font-size="24" fill="#000" textLength="128.0" lengthAdjust="spacingAndGlyphs" >ASSIGNED</text>
<text x="1759.6" y="538" font-family="Liberation Sans" font-size="24" fill="#000" textLength="191.0" lengthAdjust="spacingAndGlyphs" >11/01/21 07:00</text>
<rect x="1960" y="513.8" width="35.9" height="30" fill="#4a76bd" />
<rect x="1966.4" y="510" width="3.8" height="6" fill="#4a76bd" />
<rect x="1986.2" y="510" width="3.8" height="6" fill="#4a76bd" />
<rect x="1964.2" y="520.1" width="3.9" height="8" fill="#ffffff" />
<rect x="1972.2" y="520.1" width="3.9" height="8" fill="#ffffff" />
<rect x="1980.2" y="520.1" width="3.9" height="8" fill="#ffffff" />
<rect x="1988.2" y="520.1" width="3.9" height="8" fill="#ffffff" />
<rect x="1964.2" y="532.3" width="3.9" height="7.7" fill="#ffffff" />
<rect x="1972.2" y="532.3" width="3.9" height="7.7" fill="#ffffff" />
<circle cx="1987.1" cy="534.9" r="7.6" fill="#e9eef6" stroke="#4a76bd" stroke-width="1"/>
<path d="M1983.2,534.3 L1986.4,537.6 L1991.5,530.5" fill="none" stroke="#4a76bd" stroke-width="1.7" />
<text x="2011" y="538" font-family="Liberation Sans" font-size="24" fill="#000" clip-path="url(#c11)" >1</text>
<rect x="474" y="557" width="36" height="37" fill="#4a76bd" />
<path d="M479,576 L488,585 L506,565" fill="none" stroke="#ffffff" stroke-width="4.5" stroke-linecap="round"/>
<text x="522" y="594" font-family="Liberation Sans" font-size="24" fill="#000" textLength="57.4" lengthAdjust="spacingAndGlyphs" >1324</text>
<path d="M794.5,595.5 L810.0,580.0" fill="none" stroke="#4a76bd" stroke-width="7" stroke-linecap="round"/>
<path d="M817.5,568.5 A6.2,6.2 0 1 0 821.5,573.5" fill="none" stroke="#4a76bd" stroke-width="6" />
<circle cx="793.9" cy="596.0" r="1.8" fill="#d6e3f0"/>
<text x="834.6" y="594" font-family="Liberation Sans" font-size="24" fill="#000" textLength="322.2" lengthAdjust="spacingAndGlyphs" clip-path="url(#c12)" >Snagging List 1B Tennyson</text>
<text x="1153.5" y="594" font-family="Liberation Sans" font-size="24" fill="#000" textLength="53.7" lengthAdjust="spacingAndGlyphs" >8:00</text>
<text x="1315" y="594" font-family="Liberation Sans" font-size="24" fill="#000" textLength="389.9" lengthAdjust="spacingAndGlyphs" clip-path="url(#c13)" >Home Internals - Snagging Crew</text>
<text x="1604" y="594" font-family="Liberation Sans" font-size="24" fill="#000" textLength="128.0" lengthAdjust="spacingAndGlyphs" >ASSIGNED</text>
<text x="1759.6" y="594" font-family="Liberation Sans" font-size="24" fill="#000" textLength="191.0" lengthAdjust="spacingAndGlyphs" >12/01/21 07:00</text>
<rect x="1960" y="569.8" width="35.9" height="30" fill="#4a76bd" />
<rect x="1966.4" y="566" width="3.8" height="6" fill="#4a76bd" />
<rect x="1986.2" y="566" width="3.8" height="6" fill="#4a76bd" />
<rect x="1964.2" y="576.1" width="3.9" height="8" fill="#ffffff" />
<rect x="1972.2" y="576.1" width="3.9" height="8" fill="#ffffff" />
<rect x="1980.2" y="576.1" width="3.9" height="8" fill="#ffffff" />
<rect x="1988.2" y="576.1" width="3.9" height="8" fill="#ffffff" />
<rect x="1964.2" y="588.3" width="3.9" height="7.7" fill="#ffffff" />
<rect x="1972.2" y="588.3" width="3.9" height="7.7" fill="#ffffff" />
<circle cx="1987.1" cy="590.9" r="7.6" fill="#e9eef6" stroke="#4a76bd" stroke-width="1"/>
<path d="M1983.2,590.3 L1986.4,593.6 L1991.5,586.5" fill="none" stroke="#4a76bd" stroke-width="1.7" />
<text x="2011" y="594" font-family="Liberation Sans" font-size="24" fill="#000" clip-path="url(#c14)" >1</text>
<rect x="474" y="613" width="36" height="37" fill="#4a76bd" />
<path d="M479,632 L488,641 L506,621" fill="none" stroke="#ffffff" stroke-width="4.5" stroke-linecap="round"/>
<text x="522" y="650" font-family="Liberation Sans" font-size="24" fill="#000" textLength="57.4" lengthAdjust="spacingAndGlyphs" >1325</text>
<path d="M794.5,651.5 L810.0,636.0" fill="none" stroke="#4a76bd" stroke-width="7" stroke-linecap="round"/>
<path d="M817.5,624.5 A6.2,6.2 0 1 0 821.5,629.5" fill="none" stroke="#4a76bd" stroke-width="6" />
<circle cx="793.9" cy="652.0" r="1.8" fill="#c5e2f0"/>
<text x="834.6" y="650" font-family="Liberation Sans" font-size="24" fill="#000" textLength="322.1" lengthAdjust="spacingAndGlyphs" clip-path="url(#c15)" >Snagging List 1C Tennyson</text>
<text x="1153.5" y="650" font-family="Liberation Sans" font-size="24" fill="#000" textLength="69.0" lengthAdjust="spacingAndGlyphs" >12:00</text>
<text x="1315" y="650" font-family="Liberation Sans" font-size="24" fill="#000" textLength="389.9" lengthAdjust="spacingAndGlyphs" clip-path="url(#c16)" >Home Internals - Snagging Crew</text>
<text x="1604" y="650" font-family="Liberation Sans" font-size="24" fill="#000" textLength="128.0" lengthAdjust="spacingAndGlyphs" >ASSIGNED</text>
<text x="1759.6" y="650" font-family="Liberation Sans" font-size="24" fill="#000" textLength="191.0" lengthAdjust="spacingAndGlyphs" >12/01/21 07:00</text>
<rect x="1960" y="625.8" width="35.9" height="30" fill="#4a76bd" />
<rect x="1966.4" y="622" width="3.8" height="6" fill="#4a76bd" />
<rect x="1986.2" y="622" width="3.8" height="6" fill="#4a76bd" />
<rect x="1964.2" y="632.1" width="3.9" height="8" fill="#ffffff" />
<rect x="1972.2" y="632.1" width="3.9" height="8" fill="#ffffff" />
<rect x="1980.2" y="632.1" width="3.9" height="8" fill="#ffffff" />
<rect x="1988.2" y="632.1" width="3.9" height="8" fill="#ffffff" />
<rect x="1964.2" y="644.3" width="3.9" height="7.7" fill="#ffffff" />
<rect x="1972.2" y="644.3" width="3.9" height="7.7" fill="#ffffff" />
<circle cx="1987.1" cy="646.9" r="7.6" fill="#e9eef6" stroke="#4a76bd" stroke-width="1"/>
<path d="M1983.2,646.3 L1986.4,649.6 L1991.5,642.5" fill="none" stroke="#4a76bd" stroke-width="1.7" />
<text x="2011" y="650" font-family="Liberation Sans" font-size="24" fill="#000" clip-path="url(#c17)" >1</text>
<rect x="474" y="669" width="36" height="37" fill="#4a76bd" />
<path d="M479,688 L488,697 L506,677" fill="none" stroke="#ffffff" stroke-width="4.5" stroke-linecap="round"/>
<text x="522" y="706" font-family="Liberation Sans" font-size="24" fill="#000" textLength="57.4" lengthAdjust="spacingAndGlyphs" >1326</text>
<path d="M794.5,707.5 L810.0,692.0" fill="none" stroke="#4a76bd" stroke-width="7" stroke-linecap="round"/>
<path d="M817.5,680.5 A6.2,6.2 0 1 0 821.5,685.5" fill="none" stroke="#4a76bd" stroke-width="6" />
<circle cx="793.9" cy="708.0" r="1.8" fill="#d6e3f0"/>
<text x="834.6" y="706" font-family="Liberation Sans" font-size="24" fill="#000" textLength="322.1" lengthAdjust="spacingAndGlyphs" clip-path="url(#c18)" >Snagging List 1D Tennyson</text>
<text x="1153.5" y="706" font-family="Liberation Sans" font-size="24" fill="#000" textLength="53.7" lengthAdjust="spacingAndGlyphs" >6:00</text>
<text x="1315" y="706" font-family="Liberation Sans" font-size="24" fill="#000" textLength="389.9" lengthAdjust="spacingAndGlyphs" clip-path="url(#c19)" >Home Internals - Snagging Crew</text>
<text x="1604" y="706" font-family="Liberation Sans" font-size="24" fill="#000" textLength="128.0" lengthAdjust="spacingAndGlyphs" >ASSIGNED</text>
<text x="1759.6" y="706" font-family="Liberation Sans" font-size="24" fill="#000" textLength="191.0" lengthAdjust="spacingAndGlyphs" >12/01/21 07:00</text>
<rect x="1960" y="681.8" width="35.9" height="30" fill="#4a76bd" />
<rect x="1966.4" y="678" width="3.8" height="6" fill="#4a76bd" />
<rect x="1986.2" y="678" width="3.8" height="6" fill="#4a76bd" />
<rect x="1964.2" y="688.1" width="3.9" height="8" fill="#ffffff" />
<rect x="1972.2" y="688.1" width="3.9" height="8" fill="#ffffff" />
<rect x="1980.2" y="688.1" width="3.9" height="8" fill="#ffffff" />
<rect x="1988.2" y="688.1" width="3.9" height="8" fill="#ffffff" />
<rect x="1964.2" y="700.3" width="3.9" height="7.7" fill="#ffffff" />
<rect x="1972.2" y="700.3" width="3.9" height="7.7" fill="#ffffff" />
<circle cx="1987.1" cy="702.9" r="7.6" fill="#e9eef6" stroke="#4a76bd" stroke-width="1"/>
<path d="M1983.2,702.3 L1986.4,705.6 L1991.5,698.5" fill="none" stroke="#4a76bd" stroke-width="1.7" />
<text x="2011" y="706" font-family="Liberation Sans" font-size="24" fill="#000" clip-path="url(#c20)" >1</text>
<rect x="2018" y="332" width="10" height="392" fill="#a8a8a8" />
<rect x="2018" y="1024" width="10" height="22" fill="#a8a8a8" />
<rect x="2028" y="332" width="1263" height="112" fill="#ffffff" />
<rect x="2028" y="368" width="1263" height="2" fill="#dedede" />
<rect x="2028" y="404" width="1263" height="2" fill="#dedede" />
<rect x="2028" y="440" width="1263" height="4" fill="#dcdcdc" />
<rect x="2096" y="334" width="2" height="106" fill="#e2e2e2" />
<text x="2196.5" y="433.7" font-family="Liberation Sans" font-size="25" fill="#000" text-anchor="middle" textLength="95.6" lengthAdjust="spacingAndGlyphs" >Mon/11</text>
<rect x="2295.25" y="406" width="2" height="34" fill="#e2e2e2" />
<text x="2395.75" y="433.7" font-family="Liberation Sans" font-size="25" fill="#000" text-anchor="middle" textLength="90.2" lengthAdjust="spacingAndGlyphs" >Tue/12</text>
<rect x="2494.5" y="406" width="2" height="34" fill="#e2e2e2" />
<text x="2595.0" y="433.7" font-family="Liberation Sans" font-size="25" fill="#000" text-anchor="middle" textLength="100.5" lengthAdjust="spacingAndGlyphs" >Wed/13</text>
<rect x="2693.75" y="406" width="2" height="34" fill="#e2e2e2" />
<text x="2794.25" y="433.7" font-family="Liberation Sans" font-size="25" fill="#000" text-anchor="middle" textLength="91.3" lengthAdjust="spacingAndGlyphs" >Thu/14</text>
<rect x="2893.0" y="406" width="2" height="34" fill="#e2e2e2" />
<text x="2993.5" y="433.7" font-family="Liberation Sans" font-size="25" fill="#000" text-anchor="middle" textLength="74.9" lengthAdjust="spacingAndGlyphs" >Fri/15</text>
<rect x="3092.25" y="406" width="2" height="34" fill="#e2e2e2" />
<text x="3192.75" y="433.7" font-family="Liberation Sans" font-size="25" fill="#000" text-anchor="middle" textLength="84.8" lengthAdjust="spacingAndGlyphs" >Sat/16</text>
<text x="2057.5" y="361.8" font-family="Liberation Sans" font-size="25" fill="#000" text-anchor="end" textLength="64.0" lengthAdjust="spacingAndGlyphs" clip-path="url(#c21)" >2021</text>
<text x="2694" y="361.8" font-family="Liberation Sans" font-size="25" fill="#000" text-anchor="middle" textLength="117.7" lengthAdjust="spacingAndGlyphs" >Jan 2021</text>
<text x="2694" y="397.2" font-family="Liberation Sans" font-size="25" fill="#000" text-anchor="middle" textLength="68.0" lengthAdjust="spacingAndGlyphs" >W2...</text>
<text x="2030" y="433.7" font-family="Liberation Sans" font-size="25" fill="#000" textLength="16.0" lengthAdjust="spacingAndGlyphs" >0</text>
<text x="2030" y="397.2" font-family="Liberation Sans" font-size="25" fill="#000" >l</text>
<rect x="2028" y="500" width="1262" height="224" fill="#e0e0e0" />
<rect x="2152.0" y="500" width="66" height="56" fill="#f4f4f4" />
<rect x="2351.25" y="500" width="66" height="56" fill="#f4f4f4" />
<rect x="2550.5" y="500" width="66" height="56" fill="#f4f4f4" />
<rect x="2749.75" y="500" width="66" height="56" fill="#f4f4f4" />
<rect x="2949.0" y="500" width="66" height="56" fill="#f4f4f4" />
<rect x="2152.0" y="556" width="66" height="56" fill="#f4f4f4" />
<rect x="2351.25" y="556" width="66" height="56" fill="#f4f4f4" />
<rect x="2550.5" y="556" width="66" height="56" fill="#f4f4f4" />
<rect x="2749.75" y="556" width="66" height="56" fill="#f4f4f4" />
<rect x="2949.0" y="556" width="66" height="56" fill="#f4f4f4" />
<rect x="2152.0" y="612" width="66" height="56" fill="#ffffff" />
<rect x="2351.25" y="612" width="66" height="56" fill="#ffffff" />
<rect x="2550.5" y="612" width="66" height="56" fill="#ffffff" />
<rect x="2749.75" y="612" width="66" height="56" fill="#ffffff" />
<rect x="2949.0" y="612" width="66" height="56" fill="#ffffff" />
<rect x="2152.0" y="668" width="66" height="56" fill="#f4f4f4" />
<rect x="2351.25" y="668" width="66" height="56" fill="#f4f4f4" />
<rect x="2550.5" y="668" width="66" height="56" fill="#f4f4f4" />
<rect x="2749.75" y="668" width="66" height="56" fill="#f4f4f4" />
<rect x="2949.0" y="668" width="66" height="56" fill="#f4f4f4" />
<rect x="3290" y="332" width="2" height="460" fill="#c8c8c8" />
<rect x="3290" y="792" width="1.5" height="217" fill="#cfcfcf" />
<rect x="2154.0" y="502.0" width="95" height="52" fill="#8ed88e" stroke="#ffffff" stroke-width="2" />
<text x="2158.6" y="535.6" font-family="Liberation Serif" font-size="28" fill="#000" clip-path="url(#c22)" >Snagging List 1A</text>
<rect x="2352" y="556" width="63" height="56" fill="#ffffff" />
<rect x="2354" y="558" width="59" height="52" fill="none" stroke="#0a28f0" stroke-width="4" stroke-dasharray="10,8"/>
<rect x="2358" y="560" width="51" height="48" fill="#8ed88e" />
<text x="2360" y="591.6" font-family="Liberation Serif" font-size="28" fill="#000" clip-path="url(#c23)" >Snagging List 1B</text>
<rect x="2352" y="612" width="98" height="56" fill="#ffffff" />
<rect x="2354" y="614" width="94" height="52" fill="none" stroke="#0a28f0" stroke-width="4" stroke-dasharray="10,8"/>
<rect x="2358" y="616" width="86" height="48" fill="#8ed88e" />
<text x="2360" y="647.6" font-family="Liberation Serif" font-size="28" fill="#000" clip-path="url(#c24)" >Snagging List 1C</text>
<rect x="2352" y="668" width="48" height="56" fill="#ffffff" />
<rect x="2354" y="670" width="44" height="52" fill="none" stroke="#0a28f0" stroke-width="4" stroke-dasharray="10,8"/>
<rect x="2358" y="672" width="36" height="48" fill="#8ed88e" />
<text x="2360" y="703.6" font-family="Liberation Serif" font-size="28" fill="#000" clip-path="url(#c25)" >Snagging List 1D</text>
<rect x="516" y="1028" width="464" height="14" rx="7" fill="#808080"/>
<rect x="2154" y="1028" width="1131" height="14" rx="7" fill="#808080"/>
<rect x="3286" y="1010" width="29" height="29" rx="3" fill="#ececec" stroke="#d2d2d2" stroke-width="1.5"/>
<path d="M3293,1017 L3306,1030 M3297,1031 L3307,1031 L3307,1021" fill="none" stroke="#333" stroke-width="1.8" />
<defs><linearGradient id="tbg2" x1="0" y1="0" x2="0" y2="1"><stop offset="0" stop-color="#f8f8f8"/><stop offset="0.45" stop-color="#eeeeee"/><stop offset="0.85" stop-color="#dcdcdc"/><stop offset="1" stop-color="#d9d9d9"/></linearGradient></defs>
<rect x="472" y="1067" width="2843" height="78" fill="url(#tbg2)" />
<rect x="472" y="1144" width="2843" height="3" fill="#adadad" />
<rect x="477.0" y="1073.0" width="213" height="53" fill="#ffffff" stroke="#cccccc" stroke-width="2" />
<text x="484.8" y="1108" font-family="Liberation Sans" font-size="25" fill="#999999" textLength="136.0" lengthAdjust="spacingAndGlyphs" >Quick Filter</text>
<path d="M715.4,1080.0 L758.3,1080.0 L758.3,1087.1 L746.0,1099.4 L742.0,1112.9 L731.7,1123.2 L731.7,1101.4 L715.4,1087.1 Z M722.4,1085.7 L751.2,1085.7 L739.3,1099.1 L739.3,1111.3 L735.5,1114.7 L735.5,1100.4 Z" fill="#4a76bd" fill-rule="evenodd"/>
<circle cx="745.8" cy="1105.3" r="5.8" fill="#4a76bd"/>
<path d="M788.2,1080.0 L821.3,1080.0 L821.3,1085.4 L811.5,1095.4 L808.0,1109.9 L800.7,1114.9 L800.7,1097.2 L788.2,1085.4 Z M793.2,1084.7 L815.3,1084.7 L805.5,1095.5 L805.5,1105.9 L802.8,1107.9 L802.8,1096.6 Z" fill="#4a76bd" fill-rule="evenodd"/>
<circle cx="820.2" cy="1111.8" r="14" fill="#4a76bd"/>
<path d="M816.3,1107.9 L824.1,1115.7 M824.1,1107.9 L816.3,1115.7" fill="none" stroke="#e8edf5" stroke-width="1.8" />
<rect x="867.2" y="1085.4" width="21.6" height="8" fill="#f4f6fa" stroke="#4a76bd" stroke-width="1.8"/>
<rect x="860" y="1092.6" width="36" height="11.1" fill="#4a76bd" />
<path d="M867.2,1103.5 L888.8,1103.5 L888.8,1118.9 L876.6,1118.9 L867.2,1111.0 Z" fill="#f4f6fa" stroke="#4a76bd" stroke-width="1.8" />
<path d="M866.3,1110.5 L875.7,1110.5 L875.7,1119.8 Z" fill="#4a76bd" />
<path d="M937.8,1082 L952.1999999999999,1082 L945.0,1091.6 Z" fill="#4a76bd" />
<rect x="940.0" y="1093.8" width="9.6" height="28" fill="#4a76bd" />
<rect x="923.8" y="1097.9" width="34.2" height="23.9" fill="#4a76bd" />
<rect x="926.0" y="1100.8" width="5.5" height="8.5" fill="#e3ebf6" />
<rect x="933.8" y="1100.8" width="4.7" height="8.5" fill="#e3ebf6" />
<rect x="926.0" y="1111.5" width="5.5" height="8" fill="#e3ebf6" />
<rect x="933.8" y="1111.5" width="4.7" height="8" fill="#e3ebf6" />
<rect x="942.0" y="1096.5" width="5.6" height="12.5" fill="#e3ebf6" />
<rect x="942.0" y="1111.5" width="5.6" height="8" fill="#e3ebf6" />
<rect x="950.8" y="1100.8" width="5" height="8.5" fill="#e3ebf6" />
<rect x="950.8" y="1111.5" width="5" height="8" fill="#e3ebf6" />
<rect x="987" y="1083" width="16.5" height="16.5" fill="#eef2f9" stroke="#4a76bd" stroke-width="2"/>
<rect x="990.5" y="1090.2" width="9.5" height="2.3" fill="#4a76bd" />
<rect x="993.8" y="1102.5" width="2.8" height="2.8" fill="#4a76bd" />
<rect x="993.8" y="1108.5" width="2.8" height="2.8" fill="#4a76bd" />
<rect x="993.8" y="1114.5" width="2.8" height="2.8" fill="#4a76bd" />
<rect x="993.8" y="1120" width="2.8" height="2.8" fill="#4a76bd" />
<path d="M1010.1,1099.6 L1017.0,1107.4 L1023.9,1099.6" fill="none" stroke="#4a76bd" stroke-width="3.2" />
<rect x="1051" y="1083" width="16.5" height="16.5" fill="#eef2f9" stroke="#4a76bd" stroke-width="2"/>
<rect x="1051" y="1104.5" width="16.5" height="16.5" fill="#eef2f9" stroke="#4a76bd" stroke-width="2"/>
<rect x="1054.5" y="1090.1" width="9.5" height="2.3" fill="#4a76bd" />
<rect x="1058.1" y="1086.5" width="2.3" height="9.5" fill="#4a76bd" />
<rect x="1054.5" y="1111.6" width="9.5" height="2.3" fill="#4a76bd" />
<rect x="1058.1" y="1108.0" width="2.3" height="9.5" fill="#4a76bd" />
<path d="M1074.1,1099.6 L1081.0,1107.4 L1087.9,1099.6" fill="none" stroke="#4a76bd" stroke-width="3.2" />
<rect x="1111.1" y="1075.1" width="53.4" height="53.4" rx="5.5" fill="#fff" stroke="#5b8a22" stroke-width="2.2"/>
<path d="M1115.5,1081.0 L1149.1,1081.0 L1149.1,1086.3 L1139.5,1096.5 L1135.5,1105.0 L1128.2,1114.6 L1128.2,1097.5 L1115.5,1086.3 Z M1120.5,1085.8 L1144.0,1085.8 L1134.5,1096.0 L1132.5,1103.5 L1131.8,1104.5 L1131.8,1096.5 Z" fill="#5b8a22" fill-rule="evenodd"/>
<circle cx="1139.5" cy="1100" r="4.5" fill="#5b8a22"/>
<circle cx="1149.6" cy="1108.7" r="7" fill="#eeeeee" stroke="#5b8a22" stroke-width="1.8"/>
<rect x="1139.5" y="1119.4" width="19.7" height="5.3" rx="2" fill="#5b8a22"/>
<circle cx="1209.8" cy="1101.4" r="18.2" fill="#4a76bd"/>
<path d="M1203.8,1097 Q1203.8,1089.5 1210,1089.5 Q1216.2,1089.5 1216.2,1095.5 Q1216.2,1099 1212.8,1101 Q1210.2,1102.5 1210.2,1106" fill="none" stroke="#ffffff" stroke-width="4.2" />
<rect x="1207.8" y="1109" width="4.8" height="4.8" fill="#ffffff" />
<rect x="1247.0" y="1073.0" width="244" height="57" fill="#ffffff" stroke="#cccccc" stroke-width="2" />
<rect x="1491.0" y="1073.0" width="202" height="57" fill="#ffffff" stroke="#cccccc" stroke-width="2" />
<text x="1257" y="1107.6" font-family="Liberation Sans" font-size="25" fill="#999999" textLength="154.5" lengthAdjust="spacingAndGlyphs" >Reason Code</text>
<text x="1500.8" y="1107.6" font-family="Liberation Sans" font-size="25" fill="#000000" textLength="95.0" lengthAdjust="spacingAndGlyphs" >Full Day</text>
<path d="M1462.25,1090.25 L1471.5,1100.75 L1480.75,1090.25" fill="none" stroke="#4a76bd" stroke-width="4.5" />
<path d="M1666.25,1090.25 L1675.5,1100.75 L1684.75,1090.25" fill="none" stroke="#5aa0e8" stroke-width="4.5" />
<rect x="472" y="1147" width="1548" height="391" fill="#ffffff" />
<rect x="472" y="1147" width="2" height="391" fill="#dddddd" />
<rect x="474" y="1258" width="1546" height="56" fill="#f3f3f3" />
<rect x="474" y="1314" width="1546" height="56" fill="#f3f3f3" />
<rect x="474" y="1370" width="1546" height="56" fill="#ffffff" />
<rect x="474" y="1426" width="1546" height="56" fill="#f3f3f3" />
<rect x="474" y="1482" width="1546" height="56" fill="#5bbadb" />
<rect x="1319" y="1482" width="174" height="56" fill="#4a962a" />
<rect x="474" y="1314" width="38" height="224" fill="#e8e8e8" />
<rect x="511" y="1147" width="2" height="391" fill="#dcdcdc" />
<rect x="679" y="1147" width="2" height="391" fill="#dcdcdc" />
<rect x="1318" y="1147" width="2" height="391" fill="#dcdcdc" />
<rect x="1492" y="1147" width="2" height="391" fill="#dcdcdc" />
<rect x="1672" y="1147" width="2" height="391" fill="#dcdcdc" />
<rect x="1786" y="1147" width="2" height="391" fill="#dcdcdc" />
<rect x="512" y="1147" width="3" height="391" fill="#e0e0e0" />
<rect x="472" y="1255" width="1548" height="3" fill="#d8d8d8" />
<rect x="470" y="1256" width="2824" height="60" fill="#a3a3a3" />
<rect x="474" y="1259" width="1546" height="51" fill="#b2b2b2" />
<rect x="474" y="1259" width="38" height="51" fill="#a6a6a6" />
<rect x="511" y="1259" width="2" height="51" fill="#a0a0a0" />
<rect x="679" y="1259" width="2" height="51" fill="#a0a0a0" />
<rect x="1318" y="1259" width="2" height="51" fill="#a0a0a0" />
<rect x="1492" y="1259" width="2" height="51" fill="#a0a0a0" />
<rect x="1672" y="1259" width="2" height="51" fill="#a0a0a0" />
<rect x="1786" y="1259" width="2" height="51" fill="#a0a0a0" />
<rect x="475.5" y="1159.5" width="33" height="34" fill="#ffffff" stroke="#7a7a7a" stroke-width="3" />
<text x="521.3" y="1184.2" font-family="Liberation Sans" font-size="26" fill="#000" font-weight="bold" textLength="136.2" lengthAdjust="spacingAndGlyphs" clip-path="url(#c26)" >Resource</text>
<path d="M668.5,1163 L674,1173 L663,1173 Z" fill="none" stroke="#c8c8c8" stroke-width="1.5" />
<path d="M668.5,1187 L674,1177 L663,1177 Z" fill="none" stroke="#c8c8c8" stroke-width="1.5" />
<text x="689.5" y="1184.2" font-family="Liberation Sans" font-size="26" fill="#000" font-weight="bold" textLength="163.4" lengthAdjust="spacingAndGlyphs" clip-path="url(#c27)" >Description</text>
<path d="M1307.0,1163 L1312.5,1173 L1301.5,1173 Z" fill="none" stroke="#c8c8c8" stroke-width="1.5" />
<path d="M1307.0,1187 L1312.5,1177 L1301.5,1177 Z" fill="none" stroke="#c8c8c8" stroke-width="1.5" />
<text x="1325.8" y="1184.2" font-family="Liberation Sans" font-size="26" fill="#000" font-weight="bold" textLength="144.5" lengthAdjust="spacingAndGlyphs" clip-path="url(#c28)" >Allocation</text>
<path d="M1480.0,1163 L1485.5,1173 L1474.5,1173 Z" fill="none" stroke="#c8c8c8" stroke-width="1.5" />
<path d="M1480.0,1187 L1485.5,1177 L1474.5,1177 Z" fill="none" stroke="#c8c8c8" stroke-width="1.5" />
<text x="1500.3" y="1184.2" font-family="Liberation Sans" font-size="26" fill="#000" font-weight="bold" textLength="146.2" lengthAdjust="spacingAndGlyphs" clip-path="url(#c29)" >Skill Level</text>
<path d="M1659.5,1163 L1665,1173 L1654,1173 Z" fill="none" stroke="#c8c8c8" stroke-width="1.5" />
<path d="M1659.5,1187 L1665,1177 L1654,1177 Z" fill="none" stroke="#c8c8c8" stroke-width="1.5" />
<text x="1680.3" y="1184.2" font-family="Liberation Sans" font-size="26" fill="#000" font-weight="bold" textLength="65.6" lengthAdjust="spacingAndGlyphs" clip-path="url(#c30)" >Shift</text>
<path d="M1774.0,1163 L1779.5,1173 L1768.5,1173 Z" fill="none" stroke="#c8c8c8" stroke-width="1.5" />
<path d="M1774.0,1187 L1779.5,1177 L1768.5,1177 Z" fill="none" stroke="#c8c8c8" stroke-width="1.5" />
<text x="1794.3" y="1184.2" font-family="Liberation Sans" font-size="26" fill="#000" font-weight="bold" textLength="257.0" lengthAdjust="spacingAndGlyphs" clip-path="url(#c31)" >Crew Work Group</text>
<rect x="475.5" y="1261.5" width="33" height="34" fill="#9a9a9a" stroke="#6e6e6e" stroke-width="3" />
<text x="520.7" y="1296" font-family="Liberation Sans" font-size="24" fill="#000" textLength="63.6" lengthAdjust="spacingAndGlyphs" >CARP</text>
<rect x="694.75" y="1275.75" width="20.5" height="20.5" fill="#a8a8a8" stroke="#9c9c9c" stroke-width="1.5" />
<rect x="700" y="1285" width="10" height="2" fill="#111" />
<rect x="704" y="1281" width="2" height="10" fill="#111" />
<text x="722.7" y="1296" font-family="Liberation Sans" font-size="24" fill="#000" textLength="119.0" lengthAdjust="spacingAndGlyphs" >Carpenter</text>
<rect x="475.5" y="1317.5" width="33" height="34" fill="#ffffff" stroke="#7a7a7a" stroke-width="3" />
<text x="520.7" y="1352" font-family="Liberation Sans" font-size="24" fill="#000" textLength="73.4" lengthAdjust="spacingAndGlyphs" >ELECT</text>
<rect x="694.75" y="1331.75" width="20.5" height="20.5" fill="#efefef" stroke="#dedede" stroke-width="1.5" />
<rect x="700" y="1341" width="10" height="2" fill="#111" />
<rect x="704" y="1337" width="2" height="10" fill="#111" />
<text x="722.7" y="1352" font-family="Liberation Sans" font-size="24" fill="#000" textLength="121.5" lengthAdjust="spacingAndGlyphs" >Electrician</text>
<rect x="475.5" y="1373.5" width="33" height="34" fill="#ffffff" stroke="#7a7a7a" stroke-width="3" />
<text x="520.7" y="1408" font-family="Liberation Sans" font-size="24" fill="#000" textLength="80.6" lengthAdjust="spacingAndGlyphs" >PLUMB</text>
<rect x="694.75" y="1387.75" width="20.5" height="20.5" fill="#efefef" stroke="#dedede" stroke-width="1.5" />
<rect x="700" y="1397" width="10" height="2" fill="#111" />
<rect x="704" y="1393" width="2" height="10" fill="#111" />
<text x="722.7" y="1408" font-family="Liberation Sans" font-size="24" fill="#000" textLength="97.8" lengthAdjust="spacingAndGlyphs" >Plumber</text>
<rect x="475.5" y="1429.5" width="33" height="34" fill="#ffffff" stroke="#7a7a7a" stroke-width="3" />
<text x="520.7" y="1464" font-family="Liberation Sans" font-size="24" fill="#000" textLength="114.0" lengthAdjust="spacingAndGlyphs" >HOMEINT</text>
<rect x="694.75" y="1443.75" width="20.5" height="20.5" fill="#efefef" stroke="#dedede" stroke-width="1.5" />
<rect x="700" y="1453" width="10" height="2" fill="#111" />
<text x="722.7" y="1464" font-family="Liberation Sans" font-size="24" fill="#000" textLength="394.5" lengthAdjust="spacingAndGlyphs" >Home Internals - Snagging Crew</text>
<rect x="474" y="1484" width="36" height="37" fill="#4a76bd" />
<path d="M479,1503 L488,1512 L506,1492" fill="none" stroke="#ffffff" stroke-width="4.5" stroke-linecap="round"/>
<text x="520.7" y="1520" font-family="Liberation Sans" font-size="24" fill="#000" textLength="128.2" lengthAdjust="spacingAndGlyphs" >HOMEINT1</text>
<text x="764.9" y="1520" font-family="Liberation Sans" font-size="24" fill="#000" textLength="557.3" lengthAdjust="spacingAndGlyphs" clip-path="url(#c32)" >Home Internals - Snagging Crew - NEMA team</text>
<text x="1325.8" y="1520" font-family="Liberation Sans" font-size="24" fill="#000" textLength="53.8" lengthAdjust="spacingAndGlyphs" >95%</text>
<text x="1680.3" y="1520" font-family="Liberation Sans" font-size="24" fill="#000" textLength="53.3" lengthAdjust="spacingAndGlyphs" >DAY</text>
<rect x="2020" y="1147" width="10" height="391" fill="#a8a8a8" />
<rect x="2020" y="1259" width="10" height="51" fill="#787878" />
<rect x="2030" y="1147" width="1261" height="108" fill="#ffffff" />
<rect x="2030" y="1182" width="1261" height="2" fill="#dedede" />
<rect x="2030" y="1218" width="1261" height="2" fill="#dedede" />
<rect x="2030" y="1255" width="1261" height="4" fill="#c8c8c8" />
<rect x="2096" y="1148" width="2" height="107" fill="#e2e2e2" />
<text x="2196.5" y="1247.4" font-family="Liberation Sans" font-size="25" fill="#000" text-anchor="middle" textLength="95.6" lengthAdjust="spacingAndGlyphs" >Mon/11</text>
<rect x="2295.25" y="1220" width="2" height="35" fill="#e2e2e2" />
<text x="2395.75" y="1247.4" font-family="Liberation Sans" font-size="25" fill="#000" text-anchor="middle" textLength="90.2" lengthAdjust="spacingAndGlyphs" >Tue/12</text>
<rect x="2494.5" y="1220" width="2" height="35" fill="#e2e2e2" />
<text x="2595.0" y="1247.4" font-family="Liberation Sans" font-size="25" fill="#000" text-anchor="middle" textLength="100.5" lengthAdjust="spacingAndGlyphs" >Wed/13</text>
<rect x="2693.75" y="1220" width="2" height="35" fill="#e2e2e2" />
<text x="2794.25" y="1247.4" font-family="Liberation Sans" font-size="25" fill="#000" text-anchor="middle" textLength="91.3" lengthAdjust="spacingAndGlyphs" >Thu/14</text>
<rect x="2893.0" y="1220" width="2" height="35" fill="#e2e2e2" />
<text x="2993.5" y="1247.4" font-family="Liberation Sans" font-size="25" fill="#000" text-anchor="middle" textLength="74.9" lengthAdjust="spacingAndGlyphs" >Fri/15</text>
<rect x="3092.25" y="1220" width="2" height="35" fill="#e2e2e2" />
<text x="3192.75" y="1247.4" font-family="Liberation Sans" font-size="25" fill="#000" text-anchor="middle" textLength="84.8" lengthAdjust="spacingAndGlyphs" >Sat/16</text>
<text x="2077" y="1176.3" font-family="Liberation Sans" font-size="25" fill="#000" text-anchor="end" textLength="64.0" lengthAdjust="spacingAndGlyphs" clip-path="url(#c33)" >2021</text>
<text x="2694" y="1176.3" font-family="Liberation Sans" font-size="25" fill="#000" text-anchor="middle" textLength="147.4" lengthAdjust="spacingAndGlyphs" >Jan 2021...</text>
<text x="2694" y="1212" font-family="Liberation Sans" font-size="25" fill="#000" text-anchor="middle" textLength="68.0" lengthAdjust="spacingAndGlyphs" >W2...</text>
<text x="2031" y="1247.4" font-family="Liberation Sans" font-size="25" fill="#000" textLength="16.0" lengthAdjust="spacingAndGlyphs" >0</text>
<text x="2031" y="1212" font-family="Liberation Sans" font-size="25" fill="#000" >.</text>
<rect x="2030" y="1259" width="1261" height="279" fill="#e0e0e0" />
<rect x="2030" y="1256" width="1264" height="60" fill="#a6a6a6" />
<rect x="2030" y="1259" width="67" height="51" fill="#9e9e9e" />
<rect x="2097.0" y="1260.0" width="194" height="49" fill="#658cb2" stroke="#5e6070" stroke-width="2" />
<text x="2194.0" y="1292" font-family="Liberation Sans" font-size="21" fill="#0b1478" font-weight="bold" text-anchor="middle" textLength="105.0" lengthAdjust="spacingAndGlyphs" >0:00/40:00</text>
<rect x="2296.2" y="1260.0" width="194" height="49" fill="#658cb2" stroke="#5e6070" stroke-width="2" />
<text x="2393.2" y="1292" font-family="Liberation Sans" font-size="21" fill="#0b1478" font-weight="bold" text-anchor="middle" textLength="105.0" lengthAdjust="spacingAndGlyphs" >0:00/40:00</text>
<rect x="2495.4" y="1260.0" width="194" height="49" fill="#658cb2" stroke="#5e6070" stroke-width="2" />
<text x="2592.4" y="1292" font-family="Liberation Sans" font-size="21" fill="#0b1478" font-weight="bold" text-anchor="middle" textLength="105.0" lengthAdjust="spacingAndGlyphs" >0:00/40:00</text>
<rect x="2694.6" y="1260.0" width="194" height="49" fill="#658cb2" stroke="#5e6070" stroke-width="2" />
<text x="2791.6" y="1292" font-family="Liberation Sans" font-size="21" fill="#0b1478" font-weight="bold" text-anchor="middle" textLength="105.0" lengthAdjust="spacingAndGlyphs" >0:00/40:00</text>
<rect x="2893.8" y="1260.0" width="194" height="49" fill="#658cb2" stroke="#5e6070" stroke-width="2" />
<text x="2990.8" y="1292" font-family="Liberation Sans" font-size="21" fill="#0b1478" font-weight="bold" text-anchor="middle" textLength="105.0" lengthAdjust="spacingAndGlyphs" >0:00/40:00</text>
<rect x="3093.0" y="1260.0" width="194" height="49" fill="#a9a9a9" stroke="#5e6070" stroke-width="2" />
<text x="3190.0" y="1292" font-family="Liberation Sans" font-size="21" fill="#626262" font-weight="bold" text-anchor="middle" textLength="93.0" lengthAdjust="spacingAndGlyphs" >0:00/0:00</text>
<rect x="2097.0" y="1317.0" width="194" height="48" fill="#90c5f7" stroke="#898599" stroke-width="2" />
<text x="2194.0" y="1349" font-family="Liberation Sans" font-size="21" fill="#0b1478" font-weight="bold" text-anchor="middle" textLength="105.0" lengthAdjust="spacingAndGlyphs" >0:00/40:00</text>
<rect x="2296.2" y="1317.0" width="194" height="48" fill="#90c5f7" stroke="#898599" stroke-width="2" />
<text x="2393.2" y="1349" font-family="Liberation Sans" font-size="21" fill="#0b1478" font-weight="bold" text-anchor="middle" textLength="105.0" lengthAdjust="spacingAndGlyphs" >0:00/40:00</text>
<rect x="2495.4" y="1317.0" width="194" height="48" fill="#90c5f7" stroke="#898599" stroke-width="2" />
<text x="2592.4" y="1349" font-family="Liberation Sans" font-size="21" fill="#0b1478" font-weight="bold" text-anchor="middle" textLength="105.0" lengthAdjust="spacingAndGlyphs" >0:00/40:00</text>
<rect x="2694.6" y="1317.0" width="194" height="48" fill="#90c5f7" stroke="#898599" stroke-width="2" />
<text x="2791.6" y="1349" font-family="Liberation Sans" font-size="21" fill="#0b1478" font-weight="bold" text-anchor="middle" textLength="105.0" lengthAdjust="spacingAndGlyphs" >0:00/40:00</text>
<rect x="2893.8" y="1317.0" width="194" height="48" fill="#90c5f7" stroke="#898599" stroke-width="2" />
<text x="2990.8" y="1349" font-family="Liberation Sans" font-size="21" fill="#0b1478" font-weight="bold" text-anchor="middle" textLength="105.0" lengthAdjust="spacingAndGlyphs" >0:00/40:00</text>
<rect x="3093.0" y="1317.0" width="194" height="48" fill="#f1f1f1" stroke="#898599" stroke-width="2" />
<text x="3190.0" y="1349" font-family="Liberation Sans" font-size="21" fill="#7c7c7c" font-weight="bold" text-anchor="middle" textLength="93.0" lengthAdjust="spacingAndGlyphs" >0:00/0:00</text>
<rect x="2097.0" y="1371.0" width="194" height="50" fill="#90c5f7" stroke="#898599" stroke-width="2" />
<text x="2194.0" y="1403" font-family="Liberation Sans" font-size="21" fill="#0b1478" font-weight="bold" text-anchor="middle" textLength="93.0" lengthAdjust="spacingAndGlyphs" >0:00/4:00</text>
<rect x="2296.2" y="1371.0" width="194" height="50" fill="#90c5f7" stroke="#898599" stroke-width="2" />
<text x="2393.2" y="1403" font-family="Liberation Sans" font-size="21" fill="#0b1478" font-weight="bold" text-anchor="middle" textLength="93.0" lengthAdjust="spacingAndGlyphs" >0:00/8:00</text>
<rect x="2495.4" y="1371.0" width="194" height="50" fill="#f1f1f1" stroke="#898599" stroke-width="2" />
<text x="2592.4" y="1403" font-family="Liberation Sans" font-size="21" fill="#7c7c7c" font-weight="bold" text-anchor="middle" textLength="93.0" lengthAdjust="spacingAndGlyphs" >0:00/0:00</text>
<rect x="2694.6" y="1371.0" width="194" height="50" fill="#90c5f7" stroke="#898599" stroke-width="2" />
<text x="2791.6" y="1403" font-family="Liberation Sans" font-size="21" fill="#0b1478" font-weight="bold" text-anchor="middle" textLength="93.0" lengthAdjust="spacingAndGlyphs" >0:00/8:00</text>
<rect x="2893.8" y="1371.0" width="194" height="50" fill="#90c5f7" stroke="#898599" stroke-width="2" />
<text x="2990.8" y="1403" font-family="Liberation Sans" font-size="21" fill="#0b1478" font-weight="bold" text-anchor="middle" textLength="93.0" lengthAdjust="spacingAndGlyphs" >0:00/8:00</text>
<rect x="3093.0" y="1371.0" width="194" height="50" fill="#f1f1f1" stroke="#898599" stroke-width="2" />
<text x="3190.0" y="1403" font-family="Liberation Sans" font-size="21" fill="#7c7c7c" font-weight="bold" text-anchor="middle" textLength="93.0" lengthAdjust="spacingAndGlyphs" >0:00/0:00</text>
<rect x="2097.0" y="1427.0" width="194" height="50" fill="#f1f1f1" stroke="#898599" stroke-width="2" />
<text x="2194.0" y="1459" font-family="Liberation Sans" font-size="21" fill="#e8321e" font-weight="bold" text-anchor="middle" textLength="105.0" lengthAdjust="spacingAndGlyphs" >12:00/8:00</text>
<rect x="2296.2" y="1427.0" width="194" height="50" fill="#f1f1f1" stroke="#898599" stroke-width="2" />
<text x="2393.2" y="1459" font-family="Liberation Sans" font-size="21" fill="#e8321e" font-weight="bold" text-anchor="middle" textLength="105.0" lengthAdjust="spacingAndGlyphs" >26:00/8:00</text>
<rect x="2495.4" y="1427.0" width="194" height="50" fill="#90c5f7" stroke="#898599" stroke-width="2" />
<text x="2592.4" y="1459" font-family="Liberation Sans" font-size="21" fill="#0b1478" font-weight="bold" text-anchor="middle" textLength="93.0" lengthAdjust="spacingAndGlyphs" >0:00/8:00</text>
<rect x="2694.6" y="1427.0" width="194" height="50" fill="#90c5f7" stroke="#898599" stroke-width="2" />
<text x="2791.6" y="1459" font-family="Liberation Sans" font-size="21" fill="#0b1478" font-weight="bold" text-anchor="middle" textLength="93.0" lengthAdjust="spacingAndGlyphs" >0:00/8:00</text>
<rect x="2893.8" y="1427.0" width="194" height="50" fill="#90c5f7" stroke="#898599" stroke-width="2" />
<text x="2990.8" y="1459" font-family="Liberation Sans" font-size="21" fill="#0b1478" font-weight="bold" text-anchor="middle" textLength="93.0" lengthAdjust="spacingAndGlyphs" >0:00/8:00</text>
<rect x="3093.0" y="1427.0" width="194" height="50" fill="#f1f1f1" stroke="#898599" stroke-width="2" />
<text x="3190.0" y="1459" font-family="Liberation Sans" font-size="21" fill="#7c7c7c" font-weight="bold" text-anchor="middle" textLength="93.0" lengthAdjust="spacingAndGlyphs" >0:00/0:00</text>
<rect x="2097.0" y="1483.0" width="194" height="49" fill="#f1f1f1" stroke="#898599" stroke-width="2" />
<text x="2194.0" y="1515" font-family="Liberation Sans" font-size="21" fill="#e8321e" font-weight="bold" text-anchor="middle" textLength="50.7" lengthAdjust="spacingAndGlyphs" >-4:00</text>
<rect x="2296.2" y="1483.0" width="194" height="49" fill="#f1f1f1" stroke="#898599" stroke-width="2" />
<rect x="2298.2" y="1485" width="190" height="51" fill="none" stroke="#e8321e" stroke-width="5" stroke-dasharray="12,12"/>
<text x="2393.2" y="1515" font-family="Liberation Sans" font-size="21" fill="#e8321e" font-weight="bold" text-anchor="middle" textLength="62.8" lengthAdjust="spacingAndGlyphs" >-18:00</text>
<rect x="2495.4" y="1483.0" width="194" height="49" fill="#d2e2b0" stroke="#898599" stroke-width="2" />
<text x="2592.4" y="1515" font-family="Liberation Sans" font-size="21" fill="#1a3a0c" font-weight="bold" text-anchor="middle" textLength="43.5" lengthAdjust="spacingAndGlyphs" >8:00</text>
<rect x="2694.6" y="1483.0" width="194" height="49" fill="#d2e2b0" stroke="#898599" stroke-width="2" />
<text x="2791.6" y="1515" font-family="Liberation Sans" font-size="21" fill="#1a3a0c" font-weight="bold" text-anchor="middle" textLength="43.5" lengthAdjust="spacingAndGlyphs" >8:00</text>
<rect x="2893.8" y="1483.0" width="194" height="49" fill="#d2e2b0" stroke="#898599" stroke-width="2" />
<text x="2990.8" y="1515" font-family="Liberation Sans" font-size="21" fill="#1a3a0c" font-weight="bold" text-anchor="middle" textLength="43.5" lengthAdjust="spacingAndGlyphs" >8:00</text>
<rect x="3093.0" y="1483.0" width="194" height="49" fill="#787878" stroke="#898599" stroke-width="2" />
<text x="3190.0" y="1515" font-family="Liberation Sans" font-size="21" fill="#ffffff" font-weight="bold" text-anchor="middle" textLength="43.5" lengthAdjust="spacingAndGlyphs" >0:00</text>
<rect x="3290" y="1147" width="2" height="109" fill="#c8c8c8" />
<rect x="3290" y="1316" width="2" height="289" fill="#c8c8c8" />
<rect x="3290" y="1605" width="1.5" height="165" fill="#cfcfcf" />
<rect x="3314" y="1147" width="2" height="624" fill="#dddddd" />
<defs><linearGradient id="shb" x1="0" y1="0" x2="0" y2="1"><stop offset="0" stop-color="#000" stop-opacity="0"/><stop offset="0.5" stop-color="#000" stop-opacity="0.03"/><stop offset="1" stop-color="#000" stop-opacity="0.12"/></linearGradient><linearGradient id="shm" x1="0" y1="0" x2="1" y2="0"><stop offset="0" stop-color="#fff" stop-opacity="0.2"/><stop offset="0.035" stop-color="#fff" stop-opacity="1"/><stop offset="0.97" stop-color="#fff" stop-opacity="1"/><stop offset="1" stop-color="#fff" stop-opacity="0.3"/></linearGradient><mask id="shmask"><rect x="0" y="1690" width="3354" height="84" fill="url(#shm)"/></mask></defs>
<rect x="0" y="1695" width="3354" height="76" fill="url(#shb)" mask="url(#shmask)"/>
<rect x="0" y="1771" width="3354" height="3" fill="#2b2536" />
<path d="M0,1752 Q0,1771 19,1771 L0,1771 Z" fill="#1e2b3a" />
<path d="M3354,1752 Q3354,1771 3335,1771 L3354,1771 Z" fill="#4b2a45" />
</svg></body></html>
